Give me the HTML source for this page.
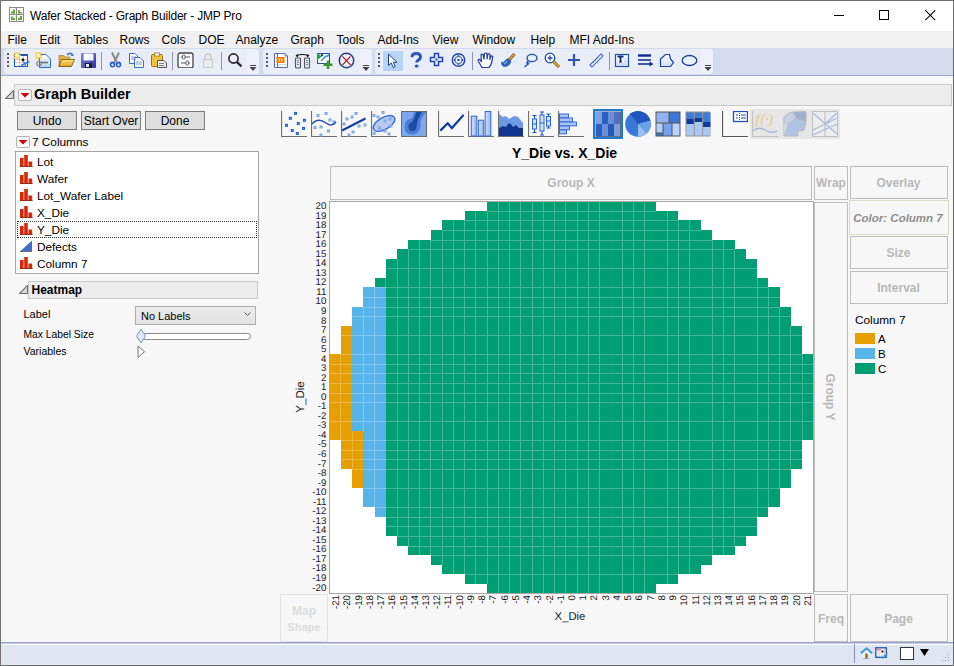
<!DOCTYPE html>
<html><head><meta charset="utf-8"><style>
html,body{margin:0;padding:0;}
body{width:954px;height:666px;position:relative;overflow:hidden;background:#f7f7f7;font-family:"Liberation Sans", sans-serif;}
</style></head><body>

<div style="position:absolute;left:0px;top:0px;width:954px;height:31px;background:#ffffff;"></div>
<div style="position:absolute;left:0px;top:31px;width:954px;height:17px;background:#f0f0f0;"></div>
<div style="position:absolute;left:0px;top:48px;width:954px;height:27px;background:#d5dbef;"></div>
<div style="position:absolute;left:0px;top:75px;width:954px;height:1px;background:#9aa7d3;"></div>
<div style="position:absolute;left:0px;top:642px;width:954px;height:1px;background:#98a4cf;"></div>
<div style="position:absolute;left:0px;top:643px;width:954px;height:1px;background:#c3cbe6;"></div>
<div style="position:absolute;left:0px;top:644px;width:954px;height:1px;background:#ffffff;"></div>
<div style="position:absolute;left:0px;top:645px;width:954px;height:20px;background:#dfe6f1;"></div>
<div style="position:absolute;left:0px;top:0px;width:954px;height:1px;background:#6f6f6f;"></div>
<div style="position:absolute;left:0px;top:665px;width:954px;height:1px;background:#6f6f6f;"></div>
<div style="position:absolute;left:0px;top:0px;width:1px;height:666px;background:#6f6f6f;"></div>
<div style="position:absolute;left:953px;top:0px;width:1px;height:666px;background:#6f6f6f;"></div>
<svg style="position:absolute;left:9px;top:7px" width="16" height="16" viewBox="0 0 16 16"><rect x="0.5" y="0.5" width="14" height="14" fill="#fff" stroke="#8a8a8a"/><line x1="7.5" y1="1" x2="7.5" y2="15" stroke="#8a8a8a"/><line x1="1" y1="7.5" x2="15" y2="7.5" stroke="#8a8a8a"/><rect x="2" y="4.5" width="4" height="2" fill="#6aa33a"/><rect x="4" y="2.5" width="2" height="4" fill="#6aa33a"/><rect x="9" y="3" width="1.8" height="3.5" fill="#6aa33a"/><rect x="9" y="5" width="4" height="1.5" fill="#6aa33a"/><rect x="2" y="9.5" width="1.8" height="3.5" fill="#6aa33a"/><rect x="2" y="11" width="4" height="2" fill="#6aa33a"/><rect x="9" y="11" width="4" height="2" fill="#6aa33a"/><rect x="11" y="9" width="2" height="4" fill="#6aa33a"/></svg>
<div style="position:absolute;left:30px;top:9.84px;font-size:12px;line-height:12px;color:#000;font-weight:normal;white-space:nowrap;letter-spacing:-0.2px;">Wafer Stacked - Graph Builder - JMP Pro</div>
<div style="position:absolute;left:834px;top:15px;width:10px;height:1px;background:#000;"></div>
<div style="position:absolute;left:879px;top:10px;width:10px;height:10px;border:1px solid #000;box-sizing:border-box;"></div>
<svg style="position:absolute;left:925px;top:10px" width="11" height="11" viewBox="0 0 11 11"><path d="M0.3 0.3 L10.2 10.2 M10.2 0.3 L0.3 10.2" stroke="#000" stroke-width="1.05"/></svg>
<div style="position:absolute;left:7.5px;top:33.84px;font-size:12px;line-height:12px;color:#000;font-weight:normal;white-space:nowrap;">File</div>
<div style="position:absolute;left:39.5px;top:33.84px;font-size:12px;line-height:12px;color:#000;font-weight:normal;white-space:nowrap;">Edit</div>
<div style="position:absolute;left:73.5px;top:33.84px;font-size:12px;line-height:12px;color:#000;font-weight:normal;white-space:nowrap;">Tables</div>
<div style="position:absolute;left:119.5px;top:33.84px;font-size:12px;line-height:12px;color:#000;font-weight:normal;white-space:nowrap;">Rows</div>
<div style="position:absolute;left:161.5px;top:33.84px;font-size:12px;line-height:12px;color:#000;font-weight:normal;white-space:nowrap;">Cols</div>
<div style="position:absolute;left:198.5px;top:33.84px;font-size:12px;line-height:12px;color:#000;font-weight:normal;white-space:nowrap;">DOE</div>
<div style="position:absolute;left:235.5px;top:33.84px;font-size:12px;line-height:12px;color:#000;font-weight:normal;white-space:nowrap;">Analyze</div>
<div style="position:absolute;left:290.5px;top:33.84px;font-size:12px;line-height:12px;color:#000;font-weight:normal;white-space:nowrap;">Graph</div>
<div style="position:absolute;left:336.5px;top:33.84px;font-size:12px;line-height:12px;color:#000;font-weight:normal;white-space:nowrap;">Tools</div>
<div style="position:absolute;left:377.5px;top:33.84px;font-size:12px;line-height:12px;color:#000;font-weight:normal;white-space:nowrap;">Add-Ins</div>
<div style="position:absolute;left:432.5px;top:33.84px;font-size:12px;line-height:12px;color:#000;font-weight:normal;white-space:nowrap;">View</div>
<div style="position:absolute;left:472.5px;top:33.84px;font-size:12px;line-height:12px;color:#000;font-weight:normal;white-space:nowrap;">Window</div>
<div style="position:absolute;left:530.5px;top:33.84px;font-size:12px;line-height:12px;color:#000;font-weight:normal;white-space:nowrap;">Help</div>
<div style="position:absolute;left:569.5px;top:33.84px;font-size:12px;line-height:12px;color:#000;font-weight:normal;white-space:nowrap;">MFI Add-Ins</div>
<div style="position:absolute;left:4px;top:49px;width:255px;height:25px;background:#e9edf8;border-radius:4px;"></div>
<div style="position:absolute;left:263px;top:49px;width:109px;height:25px;background:#e9edf8;border-radius:4px;"></div>
<div style="position:absolute;left:375px;top:49px;width:338px;height:25px;background:#e9edf8;border-radius:4px;"></div>
<div style="position:absolute;left:247px;top:49px;width:12px;height:25px;background:#eef1fa;border-radius:0 4px 4px 0;"></div>
<div style="position:absolute;left:360px;top:49px;width:12px;height:25px;background:#eef1fa;border-radius:0 4px 4px 0;"></div>
<div style="position:absolute;left:701px;top:49px;width:12px;height:25px;background:#eef1fa;border-radius:0 4px 4px 0;"></div>
<div style="position:absolute;left:7px;top:53px;width:2px;height:2px;background:#5b5b5b;"></div>
<div style="position:absolute;left:7px;top:57px;width:2px;height:2px;background:#5b5b5b;"></div>
<div style="position:absolute;left:7px;top:61px;width:2px;height:2px;background:#5b5b5b;"></div>
<div style="position:absolute;left:7px;top:65px;width:2px;height:2px;background:#5b5b5b;"></div>
<div style="position:absolute;left:266px;top:53px;width:2px;height:2px;background:#5b5b5b;"></div>
<div style="position:absolute;left:266px;top:57px;width:2px;height:2px;background:#5b5b5b;"></div>
<div style="position:absolute;left:266px;top:61px;width:2px;height:2px;background:#5b5b5b;"></div>
<div style="position:absolute;left:266px;top:65px;width:2px;height:2px;background:#5b5b5b;"></div>
<div style="position:absolute;left:378px;top:53px;width:2px;height:2px;background:#5b5b5b;"></div>
<div style="position:absolute;left:378px;top:57px;width:2px;height:2px;background:#5b5b5b;"></div>
<div style="position:absolute;left:378px;top:61px;width:2px;height:2px;background:#5b5b5b;"></div>
<div style="position:absolute;left:378px;top:65px;width:2px;height:2px;background:#5b5b5b;"></div>
<div style="position:absolute;left:101px;top:52px;width:1px;height:18px;background:#8d94b0;"></div>
<div style="position:absolute;left:172px;top:52px;width:1px;height:18px;background:#8d94b0;"></div>
<div style="position:absolute;left:221px;top:52px;width:1px;height:18px;background:#8d94b0;"></div>
<div style="position:absolute;left:472px;top:52px;width:1px;height:18px;background:#8d94b0;"></div>
<div style="position:absolute;left:609px;top:52px;width:1px;height:18px;background:#8d94b0;"></div>
<svg style="position:absolute;left:249px;top:64px" width="8" height="8" viewBox="0 0 8 8"><rect x="1" y="1" width="6" height="1" fill="#444"/><path d="M0.5 3 L7.5 3 L4 7 Z" fill="#444"/></svg>
<svg style="position:absolute;left:362px;top:64px" width="8" height="8" viewBox="0 0 8 8"><rect x="1" y="1" width="6" height="1" fill="#444"/><path d="M0.5 3 L7.5 3 L4 7 Z" fill="#444"/></svg>
<svg style="position:absolute;left:704px;top:64px" width="8" height="8" viewBox="0 0 8 8"><rect x="1" y="1" width="6" height="1" fill="#444"/><path d="M0.5 3 L7.5 3 L4 7 Z" fill="#444"/></svg>
<svg style="position:absolute;left:13px;top:52px" width="18" height="16" viewBox="0 0 18 16"><rect x="1.5" y="2.5" width="13" height="12" fill="#fff" stroke="#1f56b0"/><rect x="1" y="2" width="14" height="2" fill="#1f56b0"/><path d="M2 7.5H14 M2 10.5H14 M6.5 4V14 M10.5 4V14" stroke="#f0a0a0" stroke-width="0.7"/><path d="M4 -0.5V8 M0 3.5H8 M1 0.5L7 6.5 M7 0.5L1 6.5" stroke="#f2c94a" stroke-width="1.5"/><circle cx="4" cy="3.5" r="2" fill="#fff5c0"/><circle cx="10" cy="8" r="1.4" fill="#111"/><path d="M8 13.5 L16.5 9.5" stroke="#2f88e0" stroke-width="1.6"/><path d="M11 10 L13 15" stroke="#2f88e0" stroke-width="1.4"/></svg>
<svg style="position:absolute;left:35px;top:52px" width="18" height="16" viewBox="0 0 18 16"><path d="M4.5 2.5H11L15.5 7V15.5H4.5Z" fill="url(#sg1)" stroke="#2f6fc8"/><defs><linearGradient id="sg1" x1="0" y1="0" x2="0" y2="1"><stop offset="0" stop-color="#ffffff"/><stop offset="1" stop-color="#b9d3f2"/></linearGradient></defs><path d="M3.5 -0.5V8 M-0.5 3.5H7.5 M0.5 0.5L6.5 6.5 M6.5 0.5L0.5 6.5" stroke="#f2c94a" stroke-width="1.5"/><circle cx="3.5" cy="3.5" r="2" fill="#fff5c0"/><circle cx="4" cy="11.5" r="2.2" fill="none" stroke="#8a8a8a" stroke-width="1.3"/><path d="M6 10.5H13" stroke="#6f6f6f" stroke-width="1.6"/></svg>
<svg style="position:absolute;left:58px;top:52px" width="18" height="16" viewBox="0 0 18 16"><path d="M1 3.5H6L7.5 5H12V14H1Z" fill="#e0b040" stroke="#9a7a20" stroke-width="0.6"/><path d="M3.5 7.5H16.5L13.5 14.5H0.8Z" fill="url(#fg1)" stroke="#6a5010" stroke-width="0.8"/><defs><linearGradient id="fg1" x1="0" y1="0" x2="0" y2="1"><stop offset="0" stop-color="#ffe27a"/><stop offset="1" stop-color="#e0a020"/></linearGradient></defs><path d="M9 3Q12 -0.5 15 3" fill="none" stroke="#3b6fb0" stroke-width="1.3"/><path d="M14 1.5L16 4L13 4Z" fill="#3b6fb0"/></svg>
<svg style="position:absolute;left:80px;top:52px" width="18" height="16" viewBox="0 0 18 16"><rect x="1" y="1" width="15" height="15" rx="1" fill="url(#svg1)"/><defs><linearGradient id="svg1" x1="0" y1="0" x2="1" y2="1"><stop offset="0" stop-color="#7a7ee0"/><stop offset="1" stop-color="#30349a"/></linearGradient></defs><rect x="3.5" y="1.5" width="10" height="7" fill="#f2f4ff"/><rect x="4" y="2" width="4" height="6" fill="#ffffff"/><rect x="5" y="11" width="7" height="5" fill="#1a1a2a"/><rect x="6" y="12" width="3" height="3" fill="#e8e8e8"/></svg>
<svg style="position:absolute;left:109px;top:52px" width="13" height="16" viewBox="0 0 13 16"><path d="M3 0.5L7.5 10 M10 0.5L5.5 10" stroke="#8a8a8a" stroke-width="2"/><ellipse cx="3.5" cy="12.5" rx="2.8" ry="3" fill="#2d5fc0"/><ellipse cx="9.5" cy="12.5" rx="2.8" ry="3" fill="#2d5fc0"/><ellipse cx="3.5" cy="12.8" rx="1.2" ry="1.4" fill="#cfe0ff"/><ellipse cx="9.5" cy="12.8" rx="1.2" ry="1.4" fill="#cfe0ff"/></svg>
<svg style="position:absolute;left:128px;top:52px" width="17" height="16" viewBox="0 0 17 16"><path d="M1.5 1.5H7L9.5 4V11.5H1.5Z" fill="#fff" stroke="#2f6fc8"/><path d="M6.5 5.5H12L15.5 9V15.5H6.5Z" fill="#fff" stroke="#2f6fc8"/><path d="M3 5H8 M3 7H8 M8 10H14 M8 12H14" stroke="#5a86d0" stroke-width="0.8"/></svg>
<svg style="position:absolute;left:150px;top:52px" width="18" height="16" viewBox="0 0 18 16"><rect x="1.5" y="2.5" width="11" height="12" rx="1" fill="#f1c23c" stroke="#9a7410"/><rect x="4.5" y="1" width="5" height="3" fill="#fff" stroke="#9a7410" stroke-width="0.8"/><path d="M7.5 8.5H14L16.5 11V15.5H7.5Z" fill="#eee" stroke="#555"/><path d="M9 11.5H14 M9 13.5H14" stroke="#666" stroke-width="0.8"/></svg>
<svg style="position:absolute;left:177px;top:52px" width="17" height="16" viewBox="0 0 17 16"><rect x="1" y="1" width="15" height="15" rx="2" fill="#fafafa" stroke="#444" stroke-width="1.3"/><path d="M4 5H13 M4 11H13" stroke="#555" stroke-width="1"/><rect x="5.5" y="3" width="2.5" height="4" rx="1" fill="#fff" stroke="#555" stroke-width="0.9"/><rect x="9" y="9" width="2.5" height="4" rx="1" fill="#fff" stroke="#555" stroke-width="0.9"/></svg>
<svg style="position:absolute;left:201px;top:52px" width="14" height="16" viewBox="0 0 14 16"><path d="M4 7V5A3 3 0 0 1 10 5V7" fill="none" stroke="#c9c9c9" stroke-width="1.4"/><rect x="2.5" y="7.5" width="9" height="8" fill="#ececec" stroke="#c9c9c9"/></svg>
<svg style="position:absolute;left:227px;top:52px" width="16" height="16" viewBox="0 0 16 16"><circle cx="6.5" cy="6.5" r="4.6" fill="none" stroke="#2a2a2a" stroke-width="1.7"/><path d="M9.8 9.8L14.5 14.5" stroke="#2a2a2a" stroke-width="2.4"/></svg>
<svg style="position:absolute;left:273px;top:52px" width="16" height="17" viewBox="0 0 16 17"><path d="M1.5 1.5H12L14.5 4V15.5H1.5Z" fill="#fff" stroke="#5a6aa8"/><path d="M12 1.5V4H14.5" fill="#cfe0f8" stroke="#5a6aa8" stroke-width="0.8"/><path d="M2 5.5H14 M2 12.5H14 M2 9H14" stroke="#b8cce8" stroke-width="0.8"/><path d="M4.5 2V15" stroke="#e04040" stroke-width="1"/><rect x="3.5" y="5" width="8" height="6" fill="#f07a10"/><rect x="5.5" y="6.5" width="4" height="3" fill="#f8e040"/><path d="M7.5 6.5V9.5" stroke="#d07010" stroke-width="0.8"/></svg>
<svg style="position:absolute;left:294px;top:52px" width="17" height="17" viewBox="0 0 17 17"><rect x="1.5" y="6" width="5" height="10" rx="0.8" fill="#dce8f6" stroke="#555" stroke-width="1.1"/><rect x="10.5" y="6" width="5" height="10" rx="0.8" fill="#dce8f6" stroke="#555" stroke-width="1.1"/><path d="M3 8.5H5 M3 10.5H5 M3 12.5H5 M12 8.5H14 M12 10.5H14 M12 12.5H14" stroke="#6a7a90" stroke-width="0.9"/><path d="M2.5 3.5 Q8.5 1.5 14.5 3.5" fill="none" stroke="#111" stroke-width="1.1"/><path d="M1.5 3.8L4 2L4 5.5Z M15.5 3.8L13 2L13 5.5Z" fill="#111"/></svg>
<svg style="position:absolute;left:316px;top:52px" width="17" height="17" viewBox="0 0 17 17"><rect x="1.5" y="1.5" width="12" height="10" fill="#fff" stroke="#2050a0"/><path d="M2 4H13" stroke="#a0b8e0" stroke-width="0.8"/><path d="M1 1L6 4.5L1 8Z" fill="#2aa040"/><path d="M5 9L9 5L13 3" fill="none" stroke="#3a8ee0" stroke-width="1.4"/><circle cx="6" cy="3" r="1" fill="#111"/><path d="M12 8.5V17 M7.5 12.8H16.5" stroke="#3a9a30" stroke-width="2.6"/></svg>
<svg style="position:absolute;left:338px;top:52px" width="17" height="17" viewBox="0 0 17 17"><circle cx="8.5" cy="8.5" r="7.2" fill="#fff" stroke="#283e84" stroke-width="1.5"/><path d="M8.5 2.5V4 M8.5 13V14.5 M2.5 8.5H4 M13 8.5H14.5" stroke="#9ab0d8" stroke-width="0.8"/><path d="M4.5 4.5L8.5 8.5L12.5 4.5 M8.5 8.5L8.5 8.5 M4.5 13L8.5 8.5L12.5 13" stroke="#b02040" stroke-width="1.3" fill="none"/></svg>
<div style="position:absolute;left:383px;top:51px;width:20px;height:20px;background:#b7d3f7;"></div>
<svg style="position:absolute;left:387px;top:53px" width="12" height="16" viewBox="0 0 12 16"><path d="M1.5 1 V12.5 L4.2 10 L6.3 14.5 L8.3 13.6 L6.3 9.3 H9.8 Z" fill="#fff" stroke="#1c3f8a" stroke-width="1" stroke-linejoin="round"/></svg>
<svg style="position:absolute;left:409px;top:52px" width="14" height="16" viewBox="0 0 14 16"><path d="M3 5.2 Q3 1.5 7.3 1.5 Q11.5 1.5 11.5 4.8 Q11.5 7 9 8.3 Q7.8 9 7.8 10.5" fill="none" stroke="#2d55b8" stroke-width="3"/><ellipse cx="7.6" cy="14" rx="2" ry="1.6" fill="#2d55b8"/></svg>
<svg style="position:absolute;left:429px;top:52px" width="15" height="16" viewBox="0 0 15 16"><path d="M5.5 1.5H9.5V5.5H13.5V9.5H9.5V13.5H5.5V9.5H1.5V5.5H5.5Z" fill="#e6f0fc" stroke="#1f45a8" stroke-width="1.5"/><rect x="6.5" y="6.5" width="2" height="2" fill="#1f45a8"/></svg>
<svg style="position:absolute;left:451px;top:52px" width="15" height="16" viewBox="0 0 15 16"><circle cx="7.5" cy="8" r="6.2" fill="#e6f0fc" stroke="#1f45a8" stroke-width="1.4"/><circle cx="7.5" cy="8" r="3.6" fill="none" stroke="#1f45a8" stroke-width="0.8"/><path d="M7.5 2.8L9 4.6H6Z M7.5 13.2L9 11.4H6Z M2.3 8L4.1 6.5V9.5Z M12.7 8L10.9 6.5V9.5Z" fill="#1f45a8"/><rect x="6.5" y="7" width="2" height="2" fill="#1f45a8"/></svg>
<svg style="position:absolute;left:477px;top:52px" width="18" height="16" viewBox="0 0 18 16"><path d="M5 15.5 L1 8.5 Q1 7 2.5 7.5 L4.5 9.5 L4 3 Q4.5 1.5 6 2.5 L7 7 L7.5 1.5 Q9 0.5 10 1.5 L10 7 L11 2 Q12.5 1.5 13 2.5 L12.8 7.5 L14 4 Q15.5 3.8 15.8 5 L14.5 11 Q13.5 14 12 15.5 Z" fill="#fff" stroke="#1f3f90" stroke-width="1.2" stroke-linejoin="round"/></svg>
<svg style="position:absolute;left:500px;top:52px" width="17" height="16" viewBox="0 0 17 16"><path d="M1.5 10 Q1 15 6 14.5 Q10.5 13 11 9 L8.5 6.5 Q5 7.5 4 10 Q3 11 1.5 10Z" fill="#2a63c4" stroke="#1a4a9a" stroke-width="0.6"/><path d="M4 12 Q6 11.5 7 9" fill="none" stroke="#a8c8ff" stroke-width="1"/><path d="M9.5 7.5L14.5 2" stroke="#6a4a10" stroke-width="3"/><path d="M9.5 7.5L14.5 2" stroke="#e0a830" stroke-width="1.8"/></svg>
<svg style="position:absolute;left:523px;top:52px" width="15" height="16" viewBox="0 0 15 16"><ellipse cx="9" cy="6" rx="5" ry="3.6" fill="none" stroke="#1f4fb0" stroke-width="1.4"/><path d="M5.5 8.5 Q3 10 5 12 Q4 13 1.5 15" fill="none" stroke="#1f4fb0" stroke-width="1.3"/><circle cx="5" cy="11" r="1.2" fill="none" stroke="#1f4fb0" stroke-width="0.9"/></svg>
<svg style="position:absolute;left:544px;top:52px" width="17" height="17" viewBox="0 0 17 17"><circle cx="6" cy="6" r="4.8" fill="#fff" stroke="#1f4fb0" stroke-width="1.3"/><path d="M3.5 6H8.5 M6 3.5V8.5" stroke="#1f4fb0" stroke-width="1.3"/><path d="M9.5 9.5L15 15" stroke="#6a4a10" stroke-width="3"/><path d="M9.5 9.5L15 15" stroke="#d8a030" stroke-width="1.8"/></svg>
<svg style="position:absolute;left:567px;top:52px" width="14" height="16" viewBox="0 0 14 16"><path d="M7 2V14 M1 8H13" stroke="#2d55b8" stroke-width="2.2"/></svg>
<svg style="position:absolute;left:588px;top:52px" width="17" height="17" viewBox="0 0 17 17"><path d="M2 13L13 2L15 4L4 15Z" fill="#fff" stroke="#4a70c0" stroke-width="1.2"/><path d="M5 10L6 11 M7 8L8 9 M9 6L10 7" stroke="#4a70c0" stroke-width="0.8"/></svg>
<svg style="position:absolute;left:614px;top:53px" width="17" height="15" viewBox="0 0 17 15"><rect x="1.5" y="1.5" width="13" height="12" fill="url(#tg1)" stroke="#1c4fb0" stroke-width="1.2"/><defs><linearGradient id="tg1" x1="0" y1="0" x2="0" y2="1"><stop offset="0" stop-color="#ffffff"/><stop offset="1" stop-color="#dfe6f4"/></linearGradient></defs><path d="M3.5 3.5H9.5 M6.5 3.5V9" stroke="#0c2a8a" stroke-width="1.8"/><path d="M5 9H8" stroke="#0c2a8a" stroke-width="1"/><path d="M10 6H13.5 M10 8.5H13.5 M3 11H13.5" stroke="#b8c4e0" stroke-width="0.8"/></svg>
<svg style="position:absolute;left:637px;top:53px" width="18" height="15" viewBox="0 0 18 15"><path d="M1 2.5H14" stroke="#0c2a8a" stroke-width="2.4"/><path d="M1 7H14 M1 11H13" stroke="#0c2a8a" stroke-width="1.5"/><path d="M12.5 8.5L16.5 11L12.5 13.5Z" fill="#0c2a8a"/></svg>
<svg style="position:absolute;left:659px;top:53px" width="16" height="15" viewBox="0 0 16 15"><path d="M1.5 6L6.5 1.5H10.5L11.5 6L14.5 9.5L11.5 13.5H1.5Z" fill="url(#pg1)" stroke="#1c3f9a" stroke-width="1.2"/><defs><linearGradient id="pg1" x1="0" y1="0" x2="0" y2="1"><stop offset="0" stop-color="#f4f8ff"/><stop offset="1" stop-color="#d6e4f8"/></linearGradient></defs></svg>
<svg style="position:absolute;left:681px;top:53px" width="18" height="15" viewBox="0 0 18 15"><ellipse cx="8.5" cy="7.5" rx="7.3" ry="5" fill="#e8f0fc" stroke="#1c3f9a" stroke-width="1.3"/></svg>
<div style="position:absolute;left:14px;top:84px;width:938px;height:22px;background:#ececec;border:1px solid #c9c9c9;box-sizing:border-box;"></div>
<svg style="position:absolute;left:5px;top:90px" width="9" height="9"><path d="M8.5 0.5 L8.5 8.5 L0.5 8.5 Z" fill="#d9d9d9" stroke="#6e6e6e" stroke-width="1.1"/></svg>
<div style="position:absolute;left:18px;top:89px;width:12px;height:10px;border:1px solid #b4b4b4;border-radius:2px;background:#fafafa;"></div>
<svg style="position:absolute;left:18px;top:89px" width="14" height="12"><path d="M2.5 4.0 L11.5 4.0 L7.0 8.5 Z" fill="#d40000"/></svg>
<div style="position:absolute;left:34px;top:87.03px;font-size:14.5px;line-height:14.5px;color:#000;font-weight:bold;white-space:nowrap;">Graph Builder</div>
<div style="position:absolute;left:17px;top:111px;width:60px;height:19px;background:#dedede;border:1px solid #7b7b7b;box-sizing:border-box;"></div>
<div style="position:absolute;left:47.0px;top:114.84px;font-size:12px;line-height:12px;color:#000;font-weight:normal;white-space:nowrap;transform:translateX(-50%);">Undo</div>
<div style="position:absolute;left:81px;top:111px;width:60px;height:19px;background:#dedede;border:1px solid #7b7b7b;box-sizing:border-box;"></div>
<div style="position:absolute;left:111.0px;top:114.84px;font-size:12px;line-height:12px;color:#000;font-weight:normal;white-space:nowrap;transform:translateX(-50%);">Start Over</div>
<div style="position:absolute;left:145px;top:111px;width:60px;height:19px;background:#dedede;border:1px solid #7b7b7b;box-sizing:border-box;"></div>
<div style="position:absolute;left:175.0px;top:114.84px;font-size:12px;line-height:12px;color:#000;font-weight:normal;white-space:nowrap;transform:translateX(-50%);">Done</div>
<div style="position:absolute;left:16px;top:136px;width:12px;height:10px;border:1px solid #b4b4b4;border-radius:2px;background:#fafafa;"></div>
<svg style="position:absolute;left:16px;top:136px" width="14" height="12"><path d="M2.5 4.0 L11.5 4.0 L7.0 8.5 Z" fill="#d40000"/></svg>
<div style="position:absolute;left:32px;top:137.01px;font-size:11.8px;line-height:11.8px;color:#000;font-weight:normal;white-space:nowrap;">7 Columns</div>
<div style="position:absolute;left:15px;top:151px;width:244px;height:123px;background:#fff;border:1px solid #a5a5a5;box-sizing:border-box;"></div>
<svg style="position:absolute;left:20px;top:155px" width="13" height="12"><rect x="0" y="3" width="3.6" height="9" fill="#d42a0a"/><rect x="4.2" y="0" width="3.6" height="12" fill="#d42a0a"/><rect x="8.4" y="6.5" width="3.8" height="5.5" fill="#d42a0a"/><rect x="0" y="11" width="12.5" height="1" fill="#9a2a18"/></svg>
<div style="position:absolute;left:37px;top:156.51px;font-size:11.8px;line-height:11.8px;color:#000;font-weight:normal;white-space:nowrap;">Lot</div>
<svg style="position:absolute;left:20px;top:172px" width="13" height="12"><rect x="0" y="3" width="3.6" height="9" fill="#d42a0a"/><rect x="4.2" y="0" width="3.6" height="12" fill="#d42a0a"/><rect x="8.4" y="6.5" width="3.8" height="5.5" fill="#d42a0a"/><rect x="0" y="11" width="12.5" height="1" fill="#9a2a18"/></svg>
<div style="position:absolute;left:37px;top:173.51px;font-size:11.8px;line-height:11.8px;color:#000;font-weight:normal;white-space:nowrap;">Wafer</div>
<svg style="position:absolute;left:20px;top:189px" width="13" height="12"><rect x="0" y="3" width="3.6" height="9" fill="#d42a0a"/><rect x="4.2" y="0" width="3.6" height="12" fill="#d42a0a"/><rect x="8.4" y="6.5" width="3.8" height="5.5" fill="#d42a0a"/><rect x="0" y="11" width="12.5" height="1" fill="#9a2a18"/></svg>
<div style="position:absolute;left:37px;top:190.51px;font-size:11.8px;line-height:11.8px;color:#000;font-weight:normal;white-space:nowrap;">Lot_Wafer Label</div>
<svg style="position:absolute;left:20px;top:206px" width="13" height="12"><rect x="0" y="3" width="3.6" height="9" fill="#d42a0a"/><rect x="4.2" y="0" width="3.6" height="12" fill="#d42a0a"/><rect x="8.4" y="6.5" width="3.8" height="5.5" fill="#d42a0a"/><rect x="0" y="11" width="12.5" height="1" fill="#9a2a18"/></svg>
<div style="position:absolute;left:37px;top:207.51px;font-size:11.8px;line-height:11.8px;color:#000;font-weight:normal;white-space:nowrap;">X_Die</div>
<svg style="position:absolute;left:20px;top:223px" width="13" height="12"><rect x="0" y="3" width="3.6" height="9" fill="#d42a0a"/><rect x="4.2" y="0" width="3.6" height="12" fill="#d42a0a"/><rect x="8.4" y="6.5" width="3.8" height="5.5" fill="#d42a0a"/><rect x="0" y="11" width="12.5" height="1" fill="#9a2a18"/></svg>
<div style="position:absolute;left:37px;top:224.51px;font-size:11.8px;line-height:11.8px;color:#000;font-weight:normal;white-space:nowrap;">Y_Die</div>
<svg style="position:absolute;left:20px;top:240px" width="13" height="12"><path d="M0 11.5 L12 0.5 L12 11.5 Z" fill="#3d6ec8"/><path d="M0 11.5 L12 11.5" stroke="#6a6a6a" stroke-width="1"/></svg>
<div style="position:absolute;left:37px;top:241.51px;font-size:11.8px;line-height:11.8px;color:#000;font-weight:normal;white-space:nowrap;">Defects</div>
<svg style="position:absolute;left:20px;top:257px" width="13" height="12"><rect x="0" y="3" width="3.6" height="9" fill="#d42a0a"/><rect x="4.2" y="0" width="3.6" height="12" fill="#d42a0a"/><rect x="8.4" y="6.5" width="3.8" height="5.5" fill="#d42a0a"/><rect x="0" y="11" width="12.5" height="1" fill="#9a2a18"/></svg>
<div style="position:absolute;left:37px;top:258.51px;font-size:11.8px;line-height:11.8px;color:#000;font-weight:normal;white-space:nowrap;">Column 7</div>
<div style="position:absolute;left:17px;top:221px;width:240px;height:17px;border:1px dotted #333;box-sizing:border-box;"></div>
<svg style="position:absolute;left:19px;top:285px" width="9" height="9"><path d="M8.5 0.5 L8.5 8.5 L0.5 8.5 Z" fill="#d9d9d9" stroke="#6e6e6e" stroke-width="1.1"/></svg>
<div style="position:absolute;left:28px;top:281px;width:230px;height:18px;background:#ececec;border:1px solid #c9c9c9;box-sizing:border-box;"></div>
<div style="position:absolute;left:31.5px;top:283.84px;font-size:12px;line-height:12px;color:#000;font-weight:bold;white-space:nowrap;">Heatmap</div>
<div style="position:absolute;left:23.5px;top:308.69px;font-size:11px;line-height:11px;color:#000;font-weight:normal;white-space:nowrap;">Label</div>
<div style="position:absolute;left:23.5px;top:329.78px;font-size:10.3px;line-height:10.3px;color:#000;font-weight:normal;white-space:nowrap;">Max Label Size</div>
<div style="position:absolute;left:23.5px;top:346.11px;font-size:10.5px;line-height:10.5px;color:#000;font-weight:normal;white-space:nowrap;">Variables</div>
<div style="position:absolute;left:135px;top:306px;width:121px;height:19px;background:linear-gradient(#ececec,#e2e2e2);border:1px solid #adadad;box-sizing:border-box;"></div>
<div style="position:absolute;left:141px;top:310.69px;font-size:11px;line-height:11px;color:#000;font-weight:normal;white-space:nowrap;">No Labels</div>
<svg style="position:absolute;left:244px;top:312px" width="7" height="5"><path d="M0.5 0.5 L3.5 3.5 L6.5 0.5" fill="none" stroke="#555" stroke-width="1"/></svg>
<div style="position:absolute;left:137px;top:333px;width:114px;height:7px;background:#fff;border:1px solid #8c8c8c;border-radius:3.5px;box-sizing:border-box;"></div>
<svg style="position:absolute;left:136px;top:328px" width="11" height="16"><path d="M5 1 L9.5 8 L5 15 L0.5 8 Z" fill="#dde8f7" stroke="#7a9acc" stroke-width="1"/></svg>
<svg style="position:absolute;left:137px;top:345px" width="9" height="14"><path d="M1 1 L7.5 6.75 L1 12.5 Z" fill="#fafafa" stroke="#7a7a7a" stroke-width="1"/></svg>
<svg style="position:absolute;left:281px;top:111px" width="26" height="26" viewBox="0 0 26 26"><path d="M0.5 0V25.5H26" fill="none" stroke="#6e6e6e" stroke-width="1.2"/><rect x="13.0" y="0.8999999999999999" width="3" height="3" fill="#2060c8"/><rect x="14.0" y="1.9" width="1" height="1" fill="#6a9ae8"/><rect x="7.800000000000001" y="5.8" width="3" height="3" fill="#2060c8"/><rect x="8.8" y="6.8" width="1" height="1" fill="#6a9ae8"/><rect x="21.9" y="7.800000000000001" width="3" height="3" fill="#2060c8"/><rect x="22.9" y="8.8" width="1" height="1" fill="#6a9ae8"/><rect x="15.8" y="11.0" width="3" height="3" fill="#2060c8"/><rect x="16.8" y="12.0" width="1" height="1" fill="#6a9ae8"/><rect x="4.0" y="12.8" width="3" height="3" fill="#2060c8"/><rect x="5.0" y="13.8" width="1" height="1" fill="#6a9ae8"/><rect x="21.0" y="16.0" width="3" height="3" fill="#2060c8"/><rect x="22.0" y="17.0" width="1" height="1" fill="#6a9ae8"/><rect x="9.8" y="18.0" width="3" height="3" fill="#2060c8"/><rect x="10.8" y="19.0" width="1" height="1" fill="#6a9ae8"/><rect x="14.8" y="21.0" width="3" height="3" fill="#2060c8"/><rect x="15.8" y="22.0" width="1" height="1" fill="#6a9ae8"/></svg>
<svg style="position:absolute;left:311px;top:111px" width="26" height="26" viewBox="0 0 26 26"><path d="M0.5 0V25.5H26" fill="none" stroke="#6e6e6e" stroke-width="1.2"/><rect x="5.5" y="3.0" width="3" height="3" fill="#7aa2e0"/><rect x="6.5" y="4.0" width="1" height="1" fill="#c0d4f4"/><rect x="13.5" y="1.0" width="3" height="3" fill="#7aa2e0"/><rect x="14.5" y="2.0" width="1" height="1" fill="#c0d4f4"/><rect x="17.5" y="7.5" width="3" height="3" fill="#7aa2e0"/><rect x="18.5" y="8.5" width="1" height="1" fill="#c0d4f4"/><rect x="21.5" y="9.5" width="3" height="3" fill="#7aa2e0"/><rect x="22.5" y="10.5" width="1" height="1" fill="#c0d4f4"/><rect x="2.5" y="15.0" width="3" height="3" fill="#7aa2e0"/><rect x="3.5" y="16.0" width="1" height="1" fill="#c0d4f4"/><rect x="8.5" y="14.5" width="3" height="3" fill="#7aa2e0"/><rect x="9.5" y="15.5" width="1" height="1" fill="#c0d4f4"/><rect x="16.0" y="18.5" width="3" height="3" fill="#7aa2e0"/><rect x="17.0" y="19.5" width="1" height="1" fill="#c0d4f4"/><rect x="8.5" y="22.5" width="3" height="3" fill="#7aa2e0"/><rect x="9.5" y="23.5" width="1" height="1" fill="#c0d4f4"/><path d="M1 13 C6 7 11 9 15 12 S22 15 25 11" fill="none" stroke="#2a56b0" stroke-width="1.5"/></svg>
<svg style="position:absolute;left:341px;top:111px" width="26" height="26" viewBox="0 0 26 26"><path d="M0.5 0V25.5H26" fill="none" stroke="#6e6e6e" stroke-width="1.2"/><rect x="13.5" y="1.0" width="3" height="3" fill="#7aa2e0"/><rect x="14.5" y="2.0" width="1" height="1" fill="#c0d4f4"/><rect x="4.5" y="6.5" width="3" height="3" fill="#7aa2e0"/><rect x="5.5" y="7.5" width="1" height="1" fill="#c0d4f4"/><rect x="9.5" y="4.5" width="3" height="3" fill="#7aa2e0"/><rect x="10.5" y="5.5" width="1" height="1" fill="#c0d4f4"/><rect x="1.5" y="11.5" width="3" height="3" fill="#7aa2e0"/><rect x="2.5" y="12.5" width="1" height="1" fill="#c0d4f4"/><rect x="16.5" y="13.5" width="3" height="3" fill="#7aa2e0"/><rect x="17.5" y="14.5" width="1" height="1" fill="#c0d4f4"/><rect x="22.5" y="12.5" width="3" height="3" fill="#7aa2e0"/><rect x="23.5" y="13.5" width="1" height="1" fill="#c0d4f4"/><rect x="10.5" y="19.5" width="3" height="3" fill="#7aa2e0"/><rect x="11.5" y="20.5" width="1" height="1" fill="#c0d4f4"/><rect x="6.5" y="22.5" width="3" height="3" fill="#7aa2e0"/><rect x="7.5" y="23.5" width="1" height="1" fill="#c0d4f4"/><path d="M1 19.5 L24.5 7.5" stroke="#0f3da8" stroke-width="2"/></svg>
<svg style="position:absolute;left:371px;top:111px" width="26" height="26" viewBox="0 0 26 26"><path d="M0.5 0V25.5H26" fill="none" stroke="#6e6e6e" stroke-width="1.2"/><ellipse cx="13" cy="12.5" rx="12" ry="6" transform="rotate(-30 13 12.5)" fill="#b9c9f0" stroke="#2f6fe0" stroke-width="1.4"/><rect x="10.5" y="0.0" width="3" height="3" fill="#7aa2e0"/><rect x="11.5" y="1.0" width="1" height="1" fill="#c0d4f4"/><rect x="1.5" y="3.0" width="3" height="3" fill="#7aa2e0"/><rect x="2.5" y="4.0" width="1" height="1" fill="#c0d4f4"/><rect x="5.5" y="4.5" width="3" height="3" fill="#7aa2e0"/><rect x="6.5" y="5.5" width="1" height="1" fill="#c0d4f4"/><rect x="17.5" y="6.5" width="3" height="3" fill="#7aa2e0"/><rect x="18.5" y="7.5" width="1" height="1" fill="#c0d4f4"/><rect x="12.5" y="8.5" width="3" height="3" fill="#7aa2e0"/><rect x="13.5" y="9.5" width="1" height="1" fill="#c0d4f4"/><rect x="18.5" y="13.5" width="3" height="3" fill="#7aa2e0"/><rect x="19.5" y="14.5" width="1" height="1" fill="#c0d4f4"/><rect x="7.0" y="15.5" width="3" height="3" fill="#7aa2e0"/><rect x="8.0" y="16.5" width="1" height="1" fill="#c0d4f4"/><rect x="1.5" y="21.0" width="3" height="3" fill="#7aa2e0"/><rect x="2.5" y="22.0" width="1" height="1" fill="#c0d4f4"/><rect x="12.5" y="18.5" width="3" height="3" fill="#7aa2e0"/><rect x="13.5" y="19.5" width="1" height="1" fill="#c0d4f4"/><rect x="16.5" y="21.5" width="3" height="3" fill="#7aa2e0"/><rect x="17.5" y="22.5" width="1" height="1" fill="#c0d4f4"/></svg>
<svg style="position:absolute;left:401px;top:111px" width="26" height="26" viewBox="0 0 26 26"><rect x="0.5" y="0.5" width="25" height="25" fill="#7ea8ec" stroke="#6a6a6a"/><path d="M13 1 L25 1 Q21 6 19.5 10 Q20 13 19.5 16 Q18 23.5 11.5 23.5 Q3.5 23.5 3.5 15.5 Q3.5 8 11 7.5 Q12.5 4 13 1 Z" fill="#4a7fd8"/><path d="M15.5 1 L21 1 Q18 5.5 16.5 10 Q16 11.5 15.8 14.5 Q15.5 20 11.5 20 Q7.5 20 7.5 15.5 Q7.5 11.5 11.5 11 Q13.5 6 15.5 1 Z" fill="#1b4ca2"/></svg>
<svg style="position:absolute;left:438px;top:111px" width="26" height="26" viewBox="0 0 26 26"><path d="M0.5 0V25.5H26" fill="none" stroke="#6e6e6e" stroke-width="1.2"/><path d="M2.3 19.6 L9.7 12.3 L13.9 17 L25.6 3.9" fill="none" stroke="#0c3aa0" stroke-width="2.2"/></svg>
<svg style="position:absolute;left:468px;top:111px" width="26" height="26" viewBox="0 0 26 26"><defs><linearGradient id="bg1" x1="0" x2="1"><stop offset="0" stop-color="#d0e2fb"/><stop offset="1" stop-color="#8fb5ef"/></linearGradient></defs><path d="M0.5 0V25.5H26" fill="none" stroke="#6e6e6e" stroke-width="1.2"/><rect x="3.3" y="5.2" width="5.500000000000001" height="19.8" fill="url(#bg1)" stroke="#3868d8" stroke-width="1"/><rect x="10.4" y="9.2" width="5.299999999999999" height="15.8" fill="url(#bg1)" stroke="#3868d8" stroke-width="1"/><rect x="17.2" y="0.5" width="5.600000000000001" height="24.5" fill="url(#bg1)" stroke="#3868d8" stroke-width="1"/></svg>
<svg style="position:absolute;left:498px;top:111px" width="26" height="26" viewBox="0 0 26 26"><path d="M0.5 0V25.5H26" fill="none" stroke="#6e6e6e" stroke-width="1.2"/><path d="M1 3 L5 6 L8 5 L11 8 L16 5 L20 6 L25 12 L25 25 L1 25 Z" fill="#6c9be3"/><path d="M1 17 L5 15 L8 16 L10 13 L12 12 L15 16 L18 14 L21 17 L25 17 L25 25 L1 25 Z" fill="#0f3590"/></svg>
<svg style="position:absolute;left:528px;top:111px" width="26" height="26" viewBox="0 0 26 26"><path d="M0.5 0V25.5H26" fill="none" stroke="#6e6e6e" stroke-width="1.2"/><path d="M6.5 4.5 V21.5 M4.5 4.5 H8.5 M4.5 21.5 H8.5" stroke="#1a4fc0" stroke-width="1"/><rect x="4.5" y="8" width="4" height="10" fill="#d6e4fb" stroke="#2a62d8" stroke-width="1"/><path d="M4.5 13 H8.5" stroke="#2a62d8"/><path d="M14 1 V24 M12 1 H16 M12 24 H16" stroke="#1a4fc0" stroke-width="1"/><rect x="12" y="4" width="4" height="16" fill="#d6e4fb" stroke="#2a62d8" stroke-width="1"/><path d="M12 12 H16" stroke="#2a62d8"/><path d="M20.5 3 V17 M18.5 3 H22.5 M18.5 17 H22.5" stroke="#1a4fc0" stroke-width="1"/><rect x="18.5" y="5.5" width="4" height="9.5" fill="#d6e4fb" stroke="#2a62d8" stroke-width="1"/><path d="M18.5 10 H22.5" stroke="#2a62d8"/></svg>
<svg style="position:absolute;left:558px;top:111px" width="26" height="26" viewBox="0 0 26 26"><path d="M0.5 0V25.5H26" fill="none" stroke="#6e6e6e" stroke-width="1.2"/><rect x="1.5" y="3" width="9" height="3.8" fill="#a6c3f3" stroke="#3a6ad8" stroke-width="1"/><rect x="1.5" y="7" width="13" height="3.8" fill="#a6c3f3" stroke="#3a6ad8" stroke-width="1"/><rect x="1.5" y="11" width="17" height="3.8" fill="#a6c3f3" stroke="#3a6ad8" stroke-width="1"/><rect x="1.5" y="15" width="10" height="3.8" fill="#a6c3f3" stroke="#3a6ad8" stroke-width="1"/><rect x="1.5" y="19" width="7" height="3.8" fill="#a6c3f3" stroke="#3a6ad8" stroke-width="1"/></svg>
<div style="position:absolute;left:593px;top:109px;width:30px;height:30px;border:2px solid #1b7ad8;background:#9aa0b8;box-sizing:border-box;"></div>
<svg style="position:absolute;left:595px;top:111px" width="26" height="26" viewBox="0 0 26 26"><rect x="0" y="0" width="26" height="26" fill="#a9aebf"/><path d="M26 1V26H1" fill="none" stroke="#555a6a" stroke-width="1.6"/><rect x="1" y="1" width="6" height="12" fill="#7aa0e0"/><rect x="7" y="1" width="6" height="12" fill="#2a5fc8"/><rect x="13" y="1" width="6" height="12" fill="#6a90d8"/><rect x="19" y="1" width="6" height="12" fill="#4a70c8"/><rect x="1" y="13" width="6" height="12" fill="#2a5fc8"/><rect x="7" y="13" width="6" height="12" fill="#6a90d8"/><rect x="13" y="13" width="6" height="12" fill="#2a58b8"/><rect x="19" y="13" width="6" height="12" fill="#7aa0e0"/></svg>
<svg style="position:absolute;left:625px;top:111px" width="26" height="26" viewBox="0 0 26 26"><circle cx="13" cy="13" r="12.8" fill="#3a78d8"/><path d="M13 13 L5 2.8 A12.8 12.8 0 0 1 25.3 9.5 Z" fill="#2355c0"/><path d="M13 13 L25.3 9.5 A12.8 12.8 0 0 1 21.5 22.5 Z" fill="#6aa2e8"/><path d="M13 13 L21.5 22.5 A12.8 12.8 0 0 1 13 25.8 Z" fill="#9bbef2"/></svg>
<svg style="position:absolute;left:655px;top:111px" width="26" height="26" viewBox="0 0 26 26"><rect x="0.5" y="0.5" width="25" height="25" fill="#555"/><rect x="1.5" y="1.5" width="12" height="10" fill="#8fb4f0"/><rect x="14.5" y="1.5" width="10" height="10" fill="#3a78d8"/><rect x="1.5" y="12.5" width="6" height="9" fill="#b5d0f8"/><rect x="1.5" y="22.5" width="6" height="2" fill="#3a78d8"/><rect x="8.5" y="12.5" width="8" height="12" fill="#72a2f0"/><rect x="17.5" y="12.5" width="7" height="12" fill="#b8d2fa"/></svg>
<svg style="position:absolute;left:685px;top:111px" width="26" height="26" viewBox="0 0 26 26"><rect x="0.5" y="0.5" width="25" height="25" fill="#999"/><rect x="1.5" y="1.5" width="7.3" height="6.5" fill="#3f7ad8"/><rect x="1.5" y="8" width="7.3" height="5" fill="#0f3a9a"/><rect x="1.5" y="13" width="7.3" height="11.5" fill="#a9c8f6"/><rect x="9.8" y="1.5" width="7.3" height="5.5" fill="#3f7ad8"/><rect x="9.8" y="7" width="7.3" height="4" fill="#0f3a9a"/><rect x="9.8" y="11" width="7.3" height="13.5" fill="#a9c8f6"/><rect x="18.1" y="1.5" width="7.3" height="9.5" fill="#3f7ad8"/><rect x="18.1" y="11" width="7.3" height="5" fill="#0f3a9a"/><rect x="18.1" y="16" width="7.3" height="8.5" fill="#a9c8f6"/></svg>
<svg style="position:absolute;left:722px;top:111px" width="26" height="26" viewBox="0 0 26 26"><path d="M0.5 0V25.5H26" fill="none" stroke="#555" stroke-width="1.2"/><rect x="11.5" y="0.5" width="14" height="10" fill="#fff" stroke="#1c4fc0" stroke-width="1.3"/><path d="M14 4H16 M14 7H16 M19 4H24 M19 7H24" stroke="#1c4fc0" stroke-width="1.2"/><path d="M17.5 2V10" stroke="#1c4fc0" stroke-dasharray="1 1"/></svg>
<div style="position:absolute;left:750px;top:109px;width:90px;height:30px;background:#e6e6e6;"></div>
<svg style="position:absolute;left:752px;top:111px" width="26" height="26" viewBox="0 0 26 26"><path d="M0.5 0V25.5H26" fill="none" stroke="#c2c2c2" stroke-width="1.2"/><text x="3" y="13" font-family="Liberation Serif" font-style="italic" font-weight="bold" font-size="15" fill="#e2d3a2">f(·)</text><path d="M1 20 Q7 15 13 19 T25 20" fill="none" stroke="#a9b9d9" stroke-width="1.4"/></svg>
<svg style="position:absolute;left:782px;top:111px" width="26" height="26" viewBox="0 0 26 26"><path d="M2 6 L7 2 L11 1 L14 7 L5 14 L1 13 Z" fill="#c3d0e8"/><path d="M11 1 L24 0.5 L24 11 L15 8 Z" fill="#a0b0d0"/><path d="M5 14 L14 7 L24 11 L22 19 L16 20 L16 25 L2 25 Z" fill="#b0c2e2"/><path d="M2 6 L7 2 L11 1 L24 0.5 L24 11 L22 19 L16 20 L16 25 L2 25 Z M5 14 L14 7 L24 11 M11 1 L14 7" fill="none" stroke="#bababa" stroke-width="1"/></svg>
<svg style="position:absolute;left:812px;top:111px" width="26" height="26" viewBox="0 0 26 26"><rect x="0.5" y="0.5" width="25" height="25" fill="#ececec" stroke="#c0c0c0"/><path d="M13 0V26" stroke="#bbb"/><path d="M1 2 L25 23 M1 19 L25 7 M1 24 L25 13 M13 13 L25 2" stroke="#a9bcdf" stroke-width="1.3"/></svg>
<div style="position:absolute;left:512px;top:146.15px;font-size:14px;line-height:14px;color:#000;font-weight:bold;white-space:nowrap;">Y_Die vs. X_Die</div>
<div style="position:absolute;left:330px;top:166px;width:482px;height:34px;background:#f7f7f7;border:1px solid #bdbdbd;box-sizing:border-box;"></div>
<div style="position:absolute;left:571px;top:177.34px;font-size:12px;line-height:12px;color:#b8b8b8;font-weight:bold;white-space:nowrap;transform:translateX(-50%);">Group X</div>
<div style="position:absolute;left:814px;top:166px;width:34px;height:34px;background:#f7f7f7;border:1px solid #bdbdbd;box-sizing:border-box;"></div>
<div style="position:absolute;left:831px;top:177.34px;font-size:12px;line-height:12px;color:#b8b8b8;font-weight:bold;white-space:nowrap;transform:translateX(-50%);">Wrap</div>
<div style="position:absolute;left:850px;top:166px;width:98px;height:33px;background:#f7f7f7;border:1px solid #bdbdbd;box-sizing:border-box;"></div>
<div style="position:absolute;left:898.5px;top:176.84px;font-size:12px;line-height:12px;color:#b8b8b8;font-weight:bold;white-space:nowrap;transform:translateX(-50%);">Overlay</div>
<div style="position:absolute;left:849px;top:200px;width:100px;height:35px;background:#f7f7f7;border:1px solid #dcdccb;box-sizing:border-box;"></div>
<div style="position:absolute;left:898px;top:213.27px;font-size:11.5px;line-height:11.5px;color:#8e8e8e;font-weight:bold;white-space:nowrap;transform:translateX(-50%);font-style:italic;">Color: Column 7</div>
<div style="position:absolute;left:850px;top:236px;width:98px;height:33px;background:#f7f7f7;border:1px solid #bdbdbd;box-sizing:border-box;"></div>
<div style="position:absolute;left:898.5px;top:247.34px;font-size:12px;line-height:12px;color:#b8b8b8;font-weight:bold;white-space:nowrap;transform:translateX(-50%);">Size</div>
<div style="position:absolute;left:850px;top:271px;width:98px;height:33px;background:#f7f7f7;border:1px solid #bdbdbd;box-sizing:border-box;"></div>
<div style="position:absolute;left:898.5px;top:282.34px;font-size:12px;line-height:12px;color:#b8b8b8;font-weight:bold;white-space:nowrap;transform:translateX(-50%);">Interval</div>
<div style="position:absolute;left:855px;top:314.71px;font-size:11.8px;line-height:11.8px;color:#000;font-weight:normal;white-space:nowrap;">Column 7</div>
<div style="position:absolute;left:855px;top:333px;width:20px;height:11px;background:#e69f00;"></div>
<div style="position:absolute;left:878px;top:333.77px;font-size:11.5px;line-height:11.5px;color:#000;font-weight:normal;white-space:nowrap;">A</div>
<div style="position:absolute;left:855px;top:348px;width:20px;height:11px;background:#56b4e9;"></div>
<div style="position:absolute;left:878px;top:348.77px;font-size:11.5px;line-height:11.5px;color:#000;font-weight:normal;white-space:nowrap;">B</div>
<div style="position:absolute;left:855px;top:363px;width:20px;height:11px;background:#009e73;"></div>
<div style="position:absolute;left:878px;top:363.77px;font-size:11.5px;line-height:11.5px;color:#000;font-weight:normal;white-space:nowrap;">C</div>
<div style="position:absolute;left:814px;top:202px;width:34px;height:390px;background:#f7f7f7;border:1px solid #bdbdbd;box-sizing:border-box;"></div>
<div style="position:absolute;left:830px;top:397px;font-size:12px;line-height:12px;font-weight:bold;color:#b8b8b8;white-space:nowrap;transform:translate(-50%,-50%) rotate(90deg);">Group Y</div>
<div style="position:absolute;left:814px;top:594px;width:34px;height:48px;background:#f7f7f7;border:1px solid #bdbdbd;box-sizing:border-box;"></div>
<div style="position:absolute;left:831px;top:612.84px;font-size:12px;line-height:12px;color:#b8b8b8;font-weight:bold;white-space:nowrap;transform:translateX(-50%);">Freq</div>
<div style="position:absolute;left:850px;top:594px;width:98px;height:48px;background:#f7f7f7;border:1px solid #bdbdbd;box-sizing:border-box;"></div>
<div style="position:absolute;left:898.5px;top:612.84px;font-size:12px;line-height:12px;color:#b8b8b8;font-weight:bold;white-space:nowrap;transform:translateX(-50%);">Page</div>
<div style="position:absolute;left:280px;top:594px;width:48px;height:48px;background:#f7f7f7;border:1px solid #e2e2e2;box-sizing:border-box;"></div>
<div style="position:absolute;left:304px;top:605.34px;font-size:12px;line-height:12px;color:#dcdcdc;font-weight:bold;white-space:nowrap;transform:translateX(-50%);">Map</div>
<div style="position:absolute;left:304px;top:622.02px;font-size:11.2px;line-height:11.2px;color:#dcdcdc;font-weight:bold;white-space:nowrap;transform:translateX(-50%);">Shape</div>
<svg style="position:absolute;left:0px;top:0px" width="954" height="666" viewBox="0 0 954 666" shape-rendering="crispEdges"><rect x="330" y="202" width="483" height="391" fill="#ffffff"/><path d="M341 326h11v9h-11zM341 335h11v10h-11zM341 345h11v9h-11zM330 354h22v10h-22zM330 364h22v9h-22zM330 373h22v10h-22zM330 383h22v10h-22zM330 393h22v9h-22zM330 402h22v10h-22zM330 412h22v9h-22zM330 421h22v10h-22zM330 431h33v9h-33zM341 440h22v10h-22zM341 450h22v9h-22zM341 459h22v10h-22zM352 469h11v10h-11zM352 479h11v9h-11z" fill="#e69f00"/><path d="M363 287h23v10h-23zM363 297h23v10h-23zM352 307h34v9h-34zM352 316h34v10h-34zM352 326h34v9h-34zM352 335h34v10h-34zM352 345h34v9h-34zM352 354h34v10h-34zM352 364h34v9h-34zM352 373h34v10h-34zM352 383h34v10h-34zM352 393h34v9h-34zM352 402h34v10h-34zM352 412h34v9h-34zM352 421h34v10h-34zM363 431h23v9h-23zM363 440h23v10h-23zM363 450h23v9h-23zM363 459h23v10h-23zM363 469h23v10h-23zM363 479h23v9h-23zM363 488h23v10h-23zM363 498h23v9h-23zM375 507h11v10h-11z" fill="#56b4e9"/><path d="M487 201h169v10h-169zM465 211h213v9h-213zM442 220h259v10h-259zM431 230h281v10h-281zM408 240h327v9h-327zM397 249h349v10h-349zM386 259h371v9h-371zM386 268h371v10h-371zM375 278h393v9h-393zM386 287h394v10h-394zM386 297h394v10h-394zM386 307h405v9h-405zM386 316h405v10h-405zM386 326h416v9h-416zM386 335h416v10h-416zM386 345h416v9h-416zM386 354h427v10h-427zM386 364h427v9h-427zM386 373h427v10h-427zM386 383h427v10h-427zM386 393h427v9h-427zM386 402h427v10h-427zM386 412h427v9h-427zM386 421h427v10h-427zM386 431h427v9h-427zM386 440h416v10h-416zM386 450h416v9h-416zM386 459h416v10h-416zM386 469h405v10h-405zM386 479h405v9h-405zM386 488h394v10h-394zM386 498h394v9h-394zM386 507h382v10h-382zM386 517h371v9h-371zM386 526h371v10h-371zM397 536h349v10h-349zM408 546h327v9h-327zM431 555h281v10h-281zM442 565h259v9h-259zM465 574h213v10h-213zM487 584h169v9h-169z" fill="#009e73"/><path d="M498 201h1v10h-1zM509 201h1v10h-1zM520 201h1v10h-1zM532 201h1v10h-1zM543 201h1v10h-1zM554 201h1v10h-1zM565 201h1v10h-1zM577 201h1v10h-1zM588 201h1v10h-1zM599 201h1v10h-1zM622 201h1v10h-1zM633 201h1v10h-1zM644 201h1v10h-1zM475 211h1v9h-1zM487 211h1v9h-1zM498 211h1v9h-1zM509 211h1v9h-1zM520 211h1v9h-1zM532 211h1v9h-1zM543 211h1v9h-1zM554 211h1v9h-1zM565 211h1v9h-1zM577 211h1v9h-1zM588 211h1v9h-1zM599 211h1v9h-1zM622 211h1v9h-1zM633 211h1v9h-1zM644 211h1v9h-1zM667 211h1v9h-1zM453 220h1v10h-1zM464 220h1v10h-1zM475 220h1v10h-1zM487 220h1v10h-1zM498 220h1v10h-1zM509 220h1v10h-1zM520 220h1v10h-1zM532 220h1v10h-1zM543 220h1v10h-1zM554 220h1v10h-1zM565 220h1v10h-1zM577 220h1v10h-1zM588 220h1v10h-1zM599 220h1v10h-1zM622 220h1v10h-1zM633 220h1v10h-1zM644 220h1v10h-1zM667 220h1v10h-1zM678 220h1v10h-1zM689 220h1v10h-1zM442 230h1v10h-1zM453 230h1v10h-1zM464 230h1v10h-1zM475 230h1v10h-1zM487 230h1v10h-1zM498 230h1v10h-1zM509 230h1v10h-1zM520 230h1v10h-1zM532 230h1v10h-1zM543 230h1v10h-1zM554 230h1v10h-1zM565 230h1v10h-1zM577 230h1v10h-1zM588 230h1v10h-1zM599 230h1v10h-1zM622 230h1v10h-1zM633 230h1v10h-1zM644 230h1v10h-1zM667 230h1v10h-1zM678 230h1v10h-1zM689 230h1v10h-1zM419 240h1v9h-1zM430 240h1v9h-1zM442 240h1v9h-1zM453 240h1v9h-1zM464 240h1v9h-1zM475 240h1v9h-1zM487 240h1v9h-1zM498 240h1v9h-1zM509 240h1v9h-1zM520 240h1v9h-1zM532 240h1v9h-1zM543 240h1v9h-1zM554 240h1v9h-1zM565 240h1v9h-1zM577 240h1v9h-1zM588 240h1v9h-1zM599 240h1v9h-1zM622 240h1v9h-1zM633 240h1v9h-1zM644 240h1v9h-1zM667 240h1v9h-1zM678 240h1v9h-1zM689 240h1v9h-1zM712 240h1v9h-1zM723 240h1v9h-1zM408 249h1v10h-1zM419 249h1v10h-1zM430 249h1v10h-1zM442 249h1v10h-1zM453 249h1v10h-1zM464 249h1v10h-1zM475 249h1v10h-1zM487 249h1v10h-1zM498 249h1v10h-1zM509 249h1v10h-1zM520 249h1v10h-1zM532 249h1v10h-1zM543 249h1v10h-1zM554 249h1v10h-1zM565 249h1v10h-1zM577 249h1v10h-1zM588 249h1v10h-1zM599 249h1v10h-1zM622 249h1v10h-1zM633 249h1v10h-1zM644 249h1v10h-1zM667 249h1v10h-1zM678 249h1v10h-1zM689 249h1v10h-1zM712 249h1v10h-1zM723 249h1v10h-1zM734 249h1v10h-1zM397 259h1v9h-1zM408 259h1v9h-1zM419 259h1v9h-1zM430 259h1v9h-1zM442 259h1v9h-1zM453 259h1v9h-1zM464 259h1v9h-1zM475 259h1v9h-1zM487 259h1v9h-1zM498 259h1v9h-1zM509 259h1v9h-1zM520 259h1v9h-1zM532 259h1v9h-1zM543 259h1v9h-1zM554 259h1v9h-1zM565 259h1v9h-1zM577 259h1v9h-1zM588 259h1v9h-1zM599 259h1v9h-1zM622 259h1v9h-1zM633 259h1v9h-1zM644 259h1v9h-1zM667 259h1v9h-1zM678 259h1v9h-1zM689 259h1v9h-1zM712 259h1v9h-1zM723 259h1v9h-1zM734 259h1v9h-1zM397 268h1v10h-1zM408 268h1v10h-1zM419 268h1v10h-1zM430 268h1v10h-1zM442 268h1v10h-1zM453 268h1v10h-1zM464 268h1v10h-1zM475 268h1v10h-1zM487 268h1v10h-1zM498 268h1v10h-1zM509 268h1v10h-1zM520 268h1v10h-1zM532 268h1v10h-1zM543 268h1v10h-1zM554 268h1v10h-1zM565 268h1v10h-1zM577 268h1v10h-1zM588 268h1v10h-1zM599 268h1v10h-1zM622 268h1v10h-1zM633 268h1v10h-1zM644 268h1v10h-1zM667 268h1v10h-1zM678 268h1v10h-1zM689 268h1v10h-1zM712 268h1v10h-1zM723 268h1v10h-1zM734 268h1v10h-1zM385 278h1v9h-1zM397 278h1v9h-1zM408 278h1v9h-1zM419 278h1v9h-1zM430 278h1v9h-1zM442 278h1v9h-1zM453 278h1v9h-1zM464 278h1v9h-1zM475 278h1v9h-1zM487 278h1v9h-1zM498 278h1v9h-1zM509 278h1v9h-1zM520 278h1v9h-1zM532 278h1v9h-1zM543 278h1v9h-1zM554 278h1v9h-1zM565 278h1v9h-1zM577 278h1v9h-1zM588 278h1v9h-1zM599 278h1v9h-1zM622 278h1v9h-1zM633 278h1v9h-1zM644 278h1v9h-1zM667 278h1v9h-1zM678 278h1v9h-1zM689 278h1v9h-1zM712 278h1v9h-1zM723 278h1v9h-1zM734 278h1v9h-1zM757 278h1v9h-1zM374 287h1v10h-1zM397 287h1v10h-1zM408 287h1v10h-1zM419 287h1v10h-1zM430 287h1v10h-1zM442 287h1v10h-1zM453 287h1v10h-1zM464 287h1v10h-1zM475 287h1v10h-1zM487 287h1v10h-1zM498 287h1v10h-1zM509 287h1v10h-1zM520 287h1v10h-1zM532 287h1v10h-1zM543 287h1v10h-1zM554 287h1v10h-1zM565 287h1v10h-1zM577 287h1v10h-1zM588 287h1v10h-1zM599 287h1v10h-1zM622 287h1v10h-1zM633 287h1v10h-1zM644 287h1v10h-1zM667 287h1v10h-1zM678 287h1v10h-1zM689 287h1v10h-1zM712 287h1v10h-1zM723 287h1v10h-1zM734 287h1v10h-1zM757 287h1v10h-1zM768 287h1v10h-1zM374 297h1v10h-1zM397 297h1v10h-1zM408 297h1v10h-1zM419 297h1v10h-1zM430 297h1v10h-1zM442 297h1v10h-1zM453 297h1v10h-1zM464 297h1v10h-1zM475 297h1v10h-1zM487 297h1v10h-1zM498 297h1v10h-1zM509 297h1v10h-1zM520 297h1v10h-1zM532 297h1v10h-1zM543 297h1v10h-1zM554 297h1v10h-1zM565 297h1v10h-1zM577 297h1v10h-1zM588 297h1v10h-1zM599 297h1v10h-1zM622 297h1v10h-1zM633 297h1v10h-1zM644 297h1v10h-1zM667 297h1v10h-1zM678 297h1v10h-1zM689 297h1v10h-1zM712 297h1v10h-1zM723 297h1v10h-1zM734 297h1v10h-1zM757 297h1v10h-1zM768 297h1v10h-1zM363 307h1v9h-1zM374 307h1v9h-1zM397 307h1v9h-1zM408 307h1v9h-1zM419 307h1v9h-1zM430 307h1v9h-1zM442 307h1v9h-1zM453 307h1v9h-1zM464 307h1v9h-1zM475 307h1v9h-1zM487 307h1v9h-1zM498 307h1v9h-1zM509 307h1v9h-1zM520 307h1v9h-1zM532 307h1v9h-1zM543 307h1v9h-1zM554 307h1v9h-1zM565 307h1v9h-1zM577 307h1v9h-1zM588 307h1v9h-1zM599 307h1v9h-1zM622 307h1v9h-1zM633 307h1v9h-1zM644 307h1v9h-1zM667 307h1v9h-1zM678 307h1v9h-1zM689 307h1v9h-1zM712 307h1v9h-1zM723 307h1v9h-1zM734 307h1v9h-1zM757 307h1v9h-1zM768 307h1v9h-1zM779 307h1v9h-1zM363 316h1v10h-1zM374 316h1v10h-1zM397 316h1v10h-1zM408 316h1v10h-1zM419 316h1v10h-1zM430 316h1v10h-1zM442 316h1v10h-1zM453 316h1v10h-1zM464 316h1v10h-1zM475 316h1v10h-1zM487 316h1v10h-1zM498 316h1v10h-1zM509 316h1v10h-1zM520 316h1v10h-1zM532 316h1v10h-1zM543 316h1v10h-1zM554 316h1v10h-1zM565 316h1v10h-1zM577 316h1v10h-1zM588 316h1v10h-1zM599 316h1v10h-1zM622 316h1v10h-1zM633 316h1v10h-1zM644 316h1v10h-1zM667 316h1v10h-1zM678 316h1v10h-1zM689 316h1v10h-1zM712 316h1v10h-1zM723 316h1v10h-1zM734 316h1v10h-1zM757 316h1v10h-1zM768 316h1v10h-1zM779 316h1v10h-1zM363 326h1v9h-1zM374 326h1v9h-1zM397 326h1v9h-1zM408 326h1v9h-1zM419 326h1v9h-1zM430 326h1v9h-1zM442 326h1v9h-1zM453 326h1v9h-1zM464 326h1v9h-1zM475 326h1v9h-1zM487 326h1v9h-1zM498 326h1v9h-1zM509 326h1v9h-1zM520 326h1v9h-1zM532 326h1v9h-1zM543 326h1v9h-1zM554 326h1v9h-1zM565 326h1v9h-1zM577 326h1v9h-1zM588 326h1v9h-1zM599 326h1v9h-1zM622 326h1v9h-1zM633 326h1v9h-1zM644 326h1v9h-1zM667 326h1v9h-1zM678 326h1v9h-1zM689 326h1v9h-1zM712 326h1v9h-1zM723 326h1v9h-1zM734 326h1v9h-1zM757 326h1v9h-1zM768 326h1v9h-1zM779 326h1v9h-1zM790 326h1v9h-1zM363 335h1v10h-1zM374 335h1v10h-1zM397 335h1v10h-1zM408 335h1v10h-1zM419 335h1v10h-1zM430 335h1v10h-1zM442 335h1v10h-1zM453 335h1v10h-1zM464 335h1v10h-1zM475 335h1v10h-1zM487 335h1v10h-1zM498 335h1v10h-1zM509 335h1v10h-1zM520 335h1v10h-1zM532 335h1v10h-1zM543 335h1v10h-1zM554 335h1v10h-1zM565 335h1v10h-1zM577 335h1v10h-1zM588 335h1v10h-1zM599 335h1v10h-1zM622 335h1v10h-1zM633 335h1v10h-1zM644 335h1v10h-1zM667 335h1v10h-1zM678 335h1v10h-1zM689 335h1v10h-1zM712 335h1v10h-1zM723 335h1v10h-1zM734 335h1v10h-1zM757 335h1v10h-1zM768 335h1v10h-1zM779 335h1v10h-1zM790 335h1v10h-1zM363 345h1v9h-1zM374 345h1v9h-1zM397 345h1v9h-1zM408 345h1v9h-1zM419 345h1v9h-1zM430 345h1v9h-1zM442 345h1v9h-1zM453 345h1v9h-1zM464 345h1v9h-1zM475 345h1v9h-1zM487 345h1v9h-1zM498 345h1v9h-1zM509 345h1v9h-1zM520 345h1v9h-1zM532 345h1v9h-1zM543 345h1v9h-1zM554 345h1v9h-1zM565 345h1v9h-1zM577 345h1v9h-1zM588 345h1v9h-1zM599 345h1v9h-1zM622 345h1v9h-1zM633 345h1v9h-1zM644 345h1v9h-1zM667 345h1v9h-1zM678 345h1v9h-1zM689 345h1v9h-1zM712 345h1v9h-1zM723 345h1v9h-1zM734 345h1v9h-1zM757 345h1v9h-1zM768 345h1v9h-1zM779 345h1v9h-1zM790 345h1v9h-1zM340 354h1v10h-1zM363 354h1v10h-1zM374 354h1v10h-1zM397 354h1v10h-1zM408 354h1v10h-1zM419 354h1v10h-1zM430 354h1v10h-1zM442 354h1v10h-1zM453 354h1v10h-1zM464 354h1v10h-1zM475 354h1v10h-1zM487 354h1v10h-1zM498 354h1v10h-1zM509 354h1v10h-1zM520 354h1v10h-1zM532 354h1v10h-1zM543 354h1v10h-1zM554 354h1v10h-1zM565 354h1v10h-1zM577 354h1v10h-1zM588 354h1v10h-1zM599 354h1v10h-1zM622 354h1v10h-1zM633 354h1v10h-1zM644 354h1v10h-1zM667 354h1v10h-1zM678 354h1v10h-1zM689 354h1v10h-1zM712 354h1v10h-1zM723 354h1v10h-1zM734 354h1v10h-1zM757 354h1v10h-1zM768 354h1v10h-1zM779 354h1v10h-1zM790 354h1v10h-1zM802 354h1v10h-1zM340 364h1v9h-1zM363 364h1v9h-1zM374 364h1v9h-1zM397 364h1v9h-1zM408 364h1v9h-1zM419 364h1v9h-1zM430 364h1v9h-1zM442 364h1v9h-1zM453 364h1v9h-1zM464 364h1v9h-1zM475 364h1v9h-1zM487 364h1v9h-1zM498 364h1v9h-1zM509 364h1v9h-1zM520 364h1v9h-1zM532 364h1v9h-1zM543 364h1v9h-1zM554 364h1v9h-1zM565 364h1v9h-1zM577 364h1v9h-1zM588 364h1v9h-1zM599 364h1v9h-1zM622 364h1v9h-1zM633 364h1v9h-1zM644 364h1v9h-1zM667 364h1v9h-1zM678 364h1v9h-1zM689 364h1v9h-1zM712 364h1v9h-1zM723 364h1v9h-1zM734 364h1v9h-1zM757 364h1v9h-1zM768 364h1v9h-1zM779 364h1v9h-1zM790 364h1v9h-1zM802 364h1v9h-1zM340 373h1v10h-1zM363 373h1v10h-1zM374 373h1v10h-1zM397 373h1v10h-1zM408 373h1v10h-1zM419 373h1v10h-1zM430 373h1v10h-1zM442 373h1v10h-1zM453 373h1v10h-1zM464 373h1v10h-1zM475 373h1v10h-1zM487 373h1v10h-1zM498 373h1v10h-1zM509 373h1v10h-1zM520 373h1v10h-1zM532 373h1v10h-1zM543 373h1v10h-1zM554 373h1v10h-1zM565 373h1v10h-1zM577 373h1v10h-1zM588 373h1v10h-1zM599 373h1v10h-1zM622 373h1v10h-1zM633 373h1v10h-1zM644 373h1v10h-1zM667 373h1v10h-1zM678 373h1v10h-1zM689 373h1v10h-1zM712 373h1v10h-1zM723 373h1v10h-1zM734 373h1v10h-1zM757 373h1v10h-1zM768 373h1v10h-1zM779 373h1v10h-1zM790 373h1v10h-1zM802 373h1v10h-1zM340 383h1v10h-1zM363 383h1v10h-1zM374 383h1v10h-1zM397 383h1v10h-1zM408 383h1v10h-1zM419 383h1v10h-1zM430 383h1v10h-1zM442 383h1v10h-1zM453 383h1v10h-1zM464 383h1v10h-1zM475 383h1v10h-1zM487 383h1v10h-1zM498 383h1v10h-1zM509 383h1v10h-1zM520 383h1v10h-1zM532 383h1v10h-1zM543 383h1v10h-1zM554 383h1v10h-1zM565 383h1v10h-1zM577 383h1v10h-1zM588 383h1v10h-1zM599 383h1v10h-1zM622 383h1v10h-1zM633 383h1v10h-1zM644 383h1v10h-1zM667 383h1v10h-1zM678 383h1v10h-1zM689 383h1v10h-1zM712 383h1v10h-1zM723 383h1v10h-1zM734 383h1v10h-1zM757 383h1v10h-1zM768 383h1v10h-1zM779 383h1v10h-1zM790 383h1v10h-1zM802 383h1v10h-1zM340 393h1v9h-1zM363 393h1v9h-1zM374 393h1v9h-1zM397 393h1v9h-1zM408 393h1v9h-1zM419 393h1v9h-1zM430 393h1v9h-1zM442 393h1v9h-1zM453 393h1v9h-1zM464 393h1v9h-1zM475 393h1v9h-1zM487 393h1v9h-1zM498 393h1v9h-1zM509 393h1v9h-1zM520 393h1v9h-1zM532 393h1v9h-1zM543 393h1v9h-1zM554 393h1v9h-1zM565 393h1v9h-1zM577 393h1v9h-1zM588 393h1v9h-1zM599 393h1v9h-1zM622 393h1v9h-1zM633 393h1v9h-1zM644 393h1v9h-1zM667 393h1v9h-1zM678 393h1v9h-1zM689 393h1v9h-1zM712 393h1v9h-1zM723 393h1v9h-1zM734 393h1v9h-1zM757 393h1v9h-1zM768 393h1v9h-1zM779 393h1v9h-1zM790 393h1v9h-1zM802 393h1v9h-1zM340 402h1v10h-1zM363 402h1v10h-1zM374 402h1v10h-1zM397 402h1v10h-1zM408 402h1v10h-1zM419 402h1v10h-1zM430 402h1v10h-1zM442 402h1v10h-1zM453 402h1v10h-1zM464 402h1v10h-1zM475 402h1v10h-1zM487 402h1v10h-1zM498 402h1v10h-1zM509 402h1v10h-1zM520 402h1v10h-1zM532 402h1v10h-1zM543 402h1v10h-1zM554 402h1v10h-1zM565 402h1v10h-1zM577 402h1v10h-1zM588 402h1v10h-1zM599 402h1v10h-1zM622 402h1v10h-1zM633 402h1v10h-1zM644 402h1v10h-1zM667 402h1v10h-1zM678 402h1v10h-1zM689 402h1v10h-1zM712 402h1v10h-1zM723 402h1v10h-1zM734 402h1v10h-1zM757 402h1v10h-1zM768 402h1v10h-1zM779 402h1v10h-1zM790 402h1v10h-1zM802 402h1v10h-1zM340 412h1v9h-1zM363 412h1v9h-1zM374 412h1v9h-1zM397 412h1v9h-1zM408 412h1v9h-1zM419 412h1v9h-1zM430 412h1v9h-1zM442 412h1v9h-1zM453 412h1v9h-1zM464 412h1v9h-1zM475 412h1v9h-1zM487 412h1v9h-1zM498 412h1v9h-1zM509 412h1v9h-1zM520 412h1v9h-1zM532 412h1v9h-1zM543 412h1v9h-1zM554 412h1v9h-1zM565 412h1v9h-1zM577 412h1v9h-1zM588 412h1v9h-1zM599 412h1v9h-1zM622 412h1v9h-1zM633 412h1v9h-1zM644 412h1v9h-1zM667 412h1v9h-1zM678 412h1v9h-1zM689 412h1v9h-1zM712 412h1v9h-1zM723 412h1v9h-1zM734 412h1v9h-1zM757 412h1v9h-1zM768 412h1v9h-1zM779 412h1v9h-1zM790 412h1v9h-1zM802 412h1v9h-1zM340 421h1v10h-1zM363 421h1v10h-1zM374 421h1v10h-1zM397 421h1v10h-1zM408 421h1v10h-1zM419 421h1v10h-1zM430 421h1v10h-1zM442 421h1v10h-1zM453 421h1v10h-1zM464 421h1v10h-1zM475 421h1v10h-1zM487 421h1v10h-1zM498 421h1v10h-1zM509 421h1v10h-1zM520 421h1v10h-1zM532 421h1v10h-1zM543 421h1v10h-1zM554 421h1v10h-1zM565 421h1v10h-1zM577 421h1v10h-1zM588 421h1v10h-1zM599 421h1v10h-1zM622 421h1v10h-1zM633 421h1v10h-1zM644 421h1v10h-1zM667 421h1v10h-1zM678 421h1v10h-1zM689 421h1v10h-1zM712 421h1v10h-1zM723 421h1v10h-1zM734 421h1v10h-1zM757 421h1v10h-1zM768 421h1v10h-1zM779 421h1v10h-1zM790 421h1v10h-1zM802 421h1v10h-1zM340 431h1v9h-1zM352 431h1v9h-1zM374 431h1v9h-1zM397 431h1v9h-1zM408 431h1v9h-1zM419 431h1v9h-1zM430 431h1v9h-1zM442 431h1v9h-1zM453 431h1v9h-1zM464 431h1v9h-1zM475 431h1v9h-1zM487 431h1v9h-1zM498 431h1v9h-1zM509 431h1v9h-1zM520 431h1v9h-1zM532 431h1v9h-1zM543 431h1v9h-1zM554 431h1v9h-1zM565 431h1v9h-1zM577 431h1v9h-1zM588 431h1v9h-1zM599 431h1v9h-1zM622 431h1v9h-1zM633 431h1v9h-1zM644 431h1v9h-1zM667 431h1v9h-1zM678 431h1v9h-1zM689 431h1v9h-1zM712 431h1v9h-1zM723 431h1v9h-1zM734 431h1v9h-1zM757 431h1v9h-1zM768 431h1v9h-1zM779 431h1v9h-1zM790 431h1v9h-1zM802 431h1v9h-1zM352 440h1v10h-1zM374 440h1v10h-1zM397 440h1v10h-1zM408 440h1v10h-1zM419 440h1v10h-1zM430 440h1v10h-1zM442 440h1v10h-1zM453 440h1v10h-1zM464 440h1v10h-1zM475 440h1v10h-1zM487 440h1v10h-1zM498 440h1v10h-1zM509 440h1v10h-1zM520 440h1v10h-1zM532 440h1v10h-1zM543 440h1v10h-1zM554 440h1v10h-1zM565 440h1v10h-1zM577 440h1v10h-1zM588 440h1v10h-1zM599 440h1v10h-1zM622 440h1v10h-1zM633 440h1v10h-1zM644 440h1v10h-1zM667 440h1v10h-1zM678 440h1v10h-1zM689 440h1v10h-1zM712 440h1v10h-1zM723 440h1v10h-1zM734 440h1v10h-1zM757 440h1v10h-1zM768 440h1v10h-1zM779 440h1v10h-1zM790 440h1v10h-1zM352 450h1v9h-1zM374 450h1v9h-1zM397 450h1v9h-1zM408 450h1v9h-1zM419 450h1v9h-1zM430 450h1v9h-1zM442 450h1v9h-1zM453 450h1v9h-1zM464 450h1v9h-1zM475 450h1v9h-1zM487 450h1v9h-1zM498 450h1v9h-1zM509 450h1v9h-1zM520 450h1v9h-1zM532 450h1v9h-1zM543 450h1v9h-1zM554 450h1v9h-1zM565 450h1v9h-1zM577 450h1v9h-1zM588 450h1v9h-1zM599 450h1v9h-1zM622 450h1v9h-1zM633 450h1v9h-1zM644 450h1v9h-1zM667 450h1v9h-1zM678 450h1v9h-1zM689 450h1v9h-1zM712 450h1v9h-1zM723 450h1v9h-1zM734 450h1v9h-1zM757 450h1v9h-1zM768 450h1v9h-1zM779 450h1v9h-1zM790 450h1v9h-1zM352 459h1v10h-1zM374 459h1v10h-1zM397 459h1v10h-1zM408 459h1v10h-1zM419 459h1v10h-1zM430 459h1v10h-1zM442 459h1v10h-1zM453 459h1v10h-1zM464 459h1v10h-1zM475 459h1v10h-1zM487 459h1v10h-1zM498 459h1v10h-1zM509 459h1v10h-1zM520 459h1v10h-1zM532 459h1v10h-1zM543 459h1v10h-1zM554 459h1v10h-1zM565 459h1v10h-1zM577 459h1v10h-1zM588 459h1v10h-1zM599 459h1v10h-1zM622 459h1v10h-1zM633 459h1v10h-1zM644 459h1v10h-1zM667 459h1v10h-1zM678 459h1v10h-1zM689 459h1v10h-1zM712 459h1v10h-1zM723 459h1v10h-1zM734 459h1v10h-1zM757 459h1v10h-1zM768 459h1v10h-1zM779 459h1v10h-1zM790 459h1v10h-1zM374 469h1v10h-1zM397 469h1v10h-1zM408 469h1v10h-1zM419 469h1v10h-1zM430 469h1v10h-1zM442 469h1v10h-1zM453 469h1v10h-1zM464 469h1v10h-1zM475 469h1v10h-1zM487 469h1v10h-1zM498 469h1v10h-1zM509 469h1v10h-1zM520 469h1v10h-1zM532 469h1v10h-1zM543 469h1v10h-1zM554 469h1v10h-1zM565 469h1v10h-1zM577 469h1v10h-1zM588 469h1v10h-1zM599 469h1v10h-1zM622 469h1v10h-1zM633 469h1v10h-1zM644 469h1v10h-1zM667 469h1v10h-1zM678 469h1v10h-1zM689 469h1v10h-1zM712 469h1v10h-1zM723 469h1v10h-1zM734 469h1v10h-1zM757 469h1v10h-1zM768 469h1v10h-1zM779 469h1v10h-1zM374 479h1v9h-1zM397 479h1v9h-1zM408 479h1v9h-1zM419 479h1v9h-1zM430 479h1v9h-1zM442 479h1v9h-1zM453 479h1v9h-1zM464 479h1v9h-1zM475 479h1v9h-1zM487 479h1v9h-1zM498 479h1v9h-1zM509 479h1v9h-1zM520 479h1v9h-1zM532 479h1v9h-1zM543 479h1v9h-1zM554 479h1v9h-1zM565 479h1v9h-1zM577 479h1v9h-1zM588 479h1v9h-1zM599 479h1v9h-1zM622 479h1v9h-1zM633 479h1v9h-1zM644 479h1v9h-1zM667 479h1v9h-1zM678 479h1v9h-1zM689 479h1v9h-1zM712 479h1v9h-1zM723 479h1v9h-1zM734 479h1v9h-1zM757 479h1v9h-1zM768 479h1v9h-1zM779 479h1v9h-1zM374 488h1v10h-1zM397 488h1v10h-1zM408 488h1v10h-1zM419 488h1v10h-1zM430 488h1v10h-1zM442 488h1v10h-1zM453 488h1v10h-1zM464 488h1v10h-1zM475 488h1v10h-1zM487 488h1v10h-1zM498 488h1v10h-1zM509 488h1v10h-1zM520 488h1v10h-1zM532 488h1v10h-1zM543 488h1v10h-1zM554 488h1v10h-1zM565 488h1v10h-1zM577 488h1v10h-1zM588 488h1v10h-1zM599 488h1v10h-1zM622 488h1v10h-1zM633 488h1v10h-1zM644 488h1v10h-1zM667 488h1v10h-1zM678 488h1v10h-1zM689 488h1v10h-1zM712 488h1v10h-1zM723 488h1v10h-1zM734 488h1v10h-1zM757 488h1v10h-1zM768 488h1v10h-1zM374 498h1v9h-1zM397 498h1v9h-1zM408 498h1v9h-1zM419 498h1v9h-1zM430 498h1v9h-1zM442 498h1v9h-1zM453 498h1v9h-1zM464 498h1v9h-1zM475 498h1v9h-1zM487 498h1v9h-1zM498 498h1v9h-1zM509 498h1v9h-1zM520 498h1v9h-1zM532 498h1v9h-1zM543 498h1v9h-1zM554 498h1v9h-1zM565 498h1v9h-1zM577 498h1v9h-1zM588 498h1v9h-1zM599 498h1v9h-1zM622 498h1v9h-1zM633 498h1v9h-1zM644 498h1v9h-1zM667 498h1v9h-1zM678 498h1v9h-1zM689 498h1v9h-1zM712 498h1v9h-1zM723 498h1v9h-1zM734 498h1v9h-1zM757 498h1v9h-1zM768 498h1v9h-1zM397 507h1v10h-1zM408 507h1v10h-1zM419 507h1v10h-1zM430 507h1v10h-1zM442 507h1v10h-1zM453 507h1v10h-1zM464 507h1v10h-1zM475 507h1v10h-1zM487 507h1v10h-1zM498 507h1v10h-1zM509 507h1v10h-1zM520 507h1v10h-1zM532 507h1v10h-1zM543 507h1v10h-1zM554 507h1v10h-1zM565 507h1v10h-1zM577 507h1v10h-1zM588 507h1v10h-1zM599 507h1v10h-1zM622 507h1v10h-1zM633 507h1v10h-1zM644 507h1v10h-1zM667 507h1v10h-1zM678 507h1v10h-1zM689 507h1v10h-1zM712 507h1v10h-1zM723 507h1v10h-1zM734 507h1v10h-1zM757 507h1v10h-1zM397 517h1v9h-1zM408 517h1v9h-1zM419 517h1v9h-1zM430 517h1v9h-1zM442 517h1v9h-1zM453 517h1v9h-1zM464 517h1v9h-1zM475 517h1v9h-1zM487 517h1v9h-1zM498 517h1v9h-1zM509 517h1v9h-1zM520 517h1v9h-1zM532 517h1v9h-1zM543 517h1v9h-1zM554 517h1v9h-1zM565 517h1v9h-1zM577 517h1v9h-1zM588 517h1v9h-1zM599 517h1v9h-1zM622 517h1v9h-1zM633 517h1v9h-1zM644 517h1v9h-1zM667 517h1v9h-1zM678 517h1v9h-1zM689 517h1v9h-1zM712 517h1v9h-1zM723 517h1v9h-1zM734 517h1v9h-1zM397 526h1v10h-1zM408 526h1v10h-1zM419 526h1v10h-1zM430 526h1v10h-1zM442 526h1v10h-1zM453 526h1v10h-1zM464 526h1v10h-1zM475 526h1v10h-1zM487 526h1v10h-1zM498 526h1v10h-1zM509 526h1v10h-1zM520 526h1v10h-1zM532 526h1v10h-1zM543 526h1v10h-1zM554 526h1v10h-1zM565 526h1v10h-1zM577 526h1v10h-1zM588 526h1v10h-1zM599 526h1v10h-1zM622 526h1v10h-1zM633 526h1v10h-1zM644 526h1v10h-1zM667 526h1v10h-1zM678 526h1v10h-1zM689 526h1v10h-1zM712 526h1v10h-1zM723 526h1v10h-1zM734 526h1v10h-1zM408 536h1v10h-1zM419 536h1v10h-1zM430 536h1v10h-1zM442 536h1v10h-1zM453 536h1v10h-1zM464 536h1v10h-1zM475 536h1v10h-1zM487 536h1v10h-1zM498 536h1v10h-1zM509 536h1v10h-1zM520 536h1v10h-1zM532 536h1v10h-1zM543 536h1v10h-1zM554 536h1v10h-1zM565 536h1v10h-1zM577 536h1v10h-1zM588 536h1v10h-1zM599 536h1v10h-1zM622 536h1v10h-1zM633 536h1v10h-1zM644 536h1v10h-1zM667 536h1v10h-1zM678 536h1v10h-1zM689 536h1v10h-1zM712 536h1v10h-1zM723 536h1v10h-1zM734 536h1v10h-1zM419 546h1v9h-1zM430 546h1v9h-1zM442 546h1v9h-1zM453 546h1v9h-1zM464 546h1v9h-1zM475 546h1v9h-1zM487 546h1v9h-1zM498 546h1v9h-1zM509 546h1v9h-1zM520 546h1v9h-1zM532 546h1v9h-1zM543 546h1v9h-1zM554 546h1v9h-1zM565 546h1v9h-1zM577 546h1v9h-1zM588 546h1v9h-1zM599 546h1v9h-1zM622 546h1v9h-1zM633 546h1v9h-1zM644 546h1v9h-1zM667 546h1v9h-1zM678 546h1v9h-1zM689 546h1v9h-1zM712 546h1v9h-1zM723 546h1v9h-1zM442 555h1v10h-1zM453 555h1v10h-1zM464 555h1v10h-1zM475 555h1v10h-1zM487 555h1v10h-1zM498 555h1v10h-1zM509 555h1v10h-1zM520 555h1v10h-1zM532 555h1v10h-1zM543 555h1v10h-1zM554 555h1v10h-1zM565 555h1v10h-1zM577 555h1v10h-1zM588 555h1v10h-1zM599 555h1v10h-1zM622 555h1v10h-1zM633 555h1v10h-1zM644 555h1v10h-1zM667 555h1v10h-1zM678 555h1v10h-1zM689 555h1v10h-1zM453 565h1v9h-1zM464 565h1v9h-1zM475 565h1v9h-1zM487 565h1v9h-1zM498 565h1v9h-1zM509 565h1v9h-1zM520 565h1v9h-1zM532 565h1v9h-1zM543 565h1v9h-1zM554 565h1v9h-1zM565 565h1v9h-1zM577 565h1v9h-1zM588 565h1v9h-1zM599 565h1v9h-1zM622 565h1v9h-1zM633 565h1v9h-1zM644 565h1v9h-1zM667 565h1v9h-1zM678 565h1v9h-1zM689 565h1v9h-1zM475 574h1v10h-1zM487 574h1v10h-1zM498 574h1v10h-1zM509 574h1v10h-1zM520 574h1v10h-1zM532 574h1v10h-1zM543 574h1v10h-1zM554 574h1v10h-1zM565 574h1v10h-1zM577 574h1v10h-1zM588 574h1v10h-1zM599 574h1v10h-1zM622 574h1v10h-1zM633 574h1v10h-1zM644 574h1v10h-1zM667 574h1v10h-1zM498 584h1v9h-1zM509 584h1v9h-1zM520 584h1v9h-1zM532 584h1v9h-1zM543 584h1v9h-1zM554 584h1v9h-1zM565 584h1v9h-1zM577 584h1v9h-1zM588 584h1v9h-1zM599 584h1v9h-1zM622 584h1v9h-1zM633 584h1v9h-1zM644 584h1v9h-1zM487 211h169v1h-169zM465 220h213v1h-213zM442 230h259v1h-259zM431 240h281v1h-281zM408 249h327v1h-327zM386 268h371v1h-371zM375 287h393v1h-393zM363 297h417v1h-417zM363 307h417v1h-417zM352 316h439v1h-439zM341 335h461v1h-461zM341 354h461v1h-461zM330 364h483v1h-483zM330 373h483v1h-483zM330 383h483v1h-483zM330 393h483v1h-483zM330 402h483v1h-483zM330 421h483v1h-483zM341 440h461v1h-461zM341 450h461v1h-461zM341 459h461v1h-461zM352 469h439v1h-439zM363 488h417v1h-417zM375 507h393v1h-393zM386 517h371v1h-371zM386 526h371v1h-371zM397 536h349v1h-349zM408 546h327v1h-327zM431 555h281v1h-281zM465 574h213v1h-213z" fill="#ffffff" fill-opacity="0.26"/></svg>
<div style="position:absolute;left:329px;top:201px;width:485px;height:393px;border:1px solid #a8a8a8;box-sizing:border-box;"></div>
<svg style="position:absolute;left:0;top:0" width="954" height="666" font-family="Liberation Sans, sans-serif" font-size="9.7" fill="#1a1a1a" text-rendering="geometricPrecision"><text x="326.3" y="209.07" text-anchor="end">20</text><text x="326.3" y="218.60" text-anchor="end">19</text><text x="326.3" y="228.14" text-anchor="end">18</text><text x="326.3" y="237.68" text-anchor="end">17</text><text x="326.3" y="247.21" text-anchor="end">16</text><text x="326.3" y="256.75" text-anchor="end">15</text><text x="326.3" y="266.29" text-anchor="end">14</text><text x="326.3" y="275.82" text-anchor="end">13</text><text x="326.3" y="285.36" text-anchor="end">12</text><text x="326.3" y="294.90" text-anchor="end">11</text><text x="326.3" y="304.43" text-anchor="end">10</text><text x="326.3" y="313.97" text-anchor="end">9</text><text x="326.3" y="323.51" text-anchor="end">8</text><text x="326.3" y="333.04" text-anchor="end">7</text><text x="326.3" y="342.58" text-anchor="end">6</text><text x="326.3" y="352.12" text-anchor="end">5</text><text x="326.3" y="361.65" text-anchor="end">4</text><text x="326.3" y="371.19" text-anchor="end">3</text><text x="326.3" y="380.73" text-anchor="end">2</text><text x="326.3" y="390.26" text-anchor="end">1</text><text x="326.3" y="399.80" text-anchor="end">0</text><text x="326.3" y="409.34" text-anchor="end">-1</text><text x="326.3" y="418.87" text-anchor="end">-2</text><text x="326.3" y="428.41" text-anchor="end">-3</text><text x="326.3" y="437.95" text-anchor="end">-4</text><text x="326.3" y="447.48" text-anchor="end">-5</text><text x="326.3" y="457.02" text-anchor="end">-6</text><text x="326.3" y="466.56" text-anchor="end">-7</text><text x="326.3" y="476.09" text-anchor="end">-8</text><text x="326.3" y="485.63" text-anchor="end">-9</text><text x="326.3" y="495.17" text-anchor="end">-10</text><text x="326.3" y="504.70" text-anchor="end">-11</text><text x="326.3" y="514.24" text-anchor="end">-12</text><text x="326.3" y="523.78" text-anchor="end">-13</text><text x="326.3" y="533.31" text-anchor="end">-14</text><text x="326.3" y="542.85" text-anchor="end">-15</text><text x="326.3" y="552.39" text-anchor="end">-16</text><text x="326.3" y="561.92" text-anchor="end">-17</text><text x="326.3" y="571.46" text-anchor="end">-18</text><text x="326.3" y="581.00" text-anchor="end">-19</text><text x="326.3" y="590.53" text-anchor="end">-20</text><text transform="translate(339,595) rotate(-90)" text-anchor="end">-21</text><text transform="translate(350,595) rotate(-90)" text-anchor="end">-20</text><text transform="translate(362,595) rotate(-90)" text-anchor="end">-19</text><text transform="translate(373,595) rotate(-90)" text-anchor="end">-18</text><text transform="translate(384,595) rotate(-90)" text-anchor="end">-17</text><text transform="translate(395,595) rotate(-90)" text-anchor="end">-16</text><text transform="translate(407,595) rotate(-90)" text-anchor="end">-15</text><text transform="translate(418,595) rotate(-90)" text-anchor="end">-14</text><text transform="translate(429,595) rotate(-90)" text-anchor="end">-13</text><text transform="translate(440,595) rotate(-90)" text-anchor="end">-12</text><text transform="translate(451,595) rotate(-90)" text-anchor="end">-11</text><text transform="translate(463,595) rotate(-90)" text-anchor="end">-10</text><text transform="translate(474,595) rotate(-90)" text-anchor="end">-9</text><text transform="translate(485,595) rotate(-90)" text-anchor="end">-8</text><text transform="translate(496,595) rotate(-90)" text-anchor="end">-7</text><text transform="translate(508,595) rotate(-90)" text-anchor="end">-6</text><text transform="translate(519,595) rotate(-90)" text-anchor="end">-5</text><text transform="translate(530,595) rotate(-90)" text-anchor="end">-4</text><text transform="translate(541,595) rotate(-90)" text-anchor="end">-3</text><text transform="translate(553,595) rotate(-90)" text-anchor="end">-2</text><text transform="translate(564,595) rotate(-90)" text-anchor="end">-1</text><text transform="translate(575,595) rotate(-90)" text-anchor="end">0</text><text transform="translate(586,595) rotate(-90)" text-anchor="end">1</text><text transform="translate(597,595) rotate(-90)" text-anchor="end">2</text><text transform="translate(609,595) rotate(-90)" text-anchor="end">3</text><text transform="translate(620,595) rotate(-90)" text-anchor="end">4</text><text transform="translate(631,595) rotate(-90)" text-anchor="end">5</text><text transform="translate(642,595) rotate(-90)" text-anchor="end">6</text><text transform="translate(654,595) rotate(-90)" text-anchor="end">7</text><text transform="translate(665,595) rotate(-90)" text-anchor="end">8</text><text transform="translate(676,595) rotate(-90)" text-anchor="end">9</text><text transform="translate(687,595) rotate(-90)" text-anchor="end">10</text><text transform="translate(699,595) rotate(-90)" text-anchor="end">11</text><text transform="translate(710,595) rotate(-90)" text-anchor="end">12</text><text transform="translate(721,595) rotate(-90)" text-anchor="end">13</text><text transform="translate(732,595) rotate(-90)" text-anchor="end">14</text><text transform="translate(743,595) rotate(-90)" text-anchor="end">15</text><text transform="translate(755,595) rotate(-90)" text-anchor="end">16</text><text transform="translate(766,595) rotate(-90)" text-anchor="end">17</text><text transform="translate(777,595) rotate(-90)" text-anchor="end">18</text><text transform="translate(788,595) rotate(-90)" text-anchor="end">19</text><text transform="translate(800,595) rotate(-90)" text-anchor="end">20</text><text transform="translate(811,595) rotate(-90)" text-anchor="end">21</text><text transform="translate(304.2,397) rotate(-90)" text-anchor="middle" font-size="11.5">Y_Die</text><text x="570" y="620" text-anchor="middle" font-size="11.3">X_Die</text></svg>
<div style="position:absolute;left:854px;top:644px;width:1px;height:19px;background:#8a93b5;"></div>
<svg style="position:absolute;left:860px;top:647px" width="13" height="12" viewBox="0 0 13 12"><path d="M2.5 6 V11.5 H10.5 V6 L6.5 2.5Z" fill="#e2eef8"/><path d="M3 11.5H10" stroke="#8ec4ea" stroke-width="1"/><path d="M0.8 6.2 L6.5 1.2 L12.2 6.2" fill="none" stroke="#3a96d4" stroke-width="1.8" stroke-linejoin="round"/><rect x="5.3" y="6.5" width="2.4" height="5" fill="#9a6a10"/></svg>
<svg style="position:absolute;left:875px;top:647px" width="14" height="12" viewBox="0 0 14 12"><rect x="0.8" y="0.8" width="10.5" height="9.5" fill="#fff" stroke="#1f5ab0" stroke-width="1.4"/><path d="M1.5 3H11 M1.5 5.5H11 M1.5 8H11" stroke="#c8d8ee" stroke-width="0.8"/><path d="M1.5 2.8H6" stroke="#f06060" stroke-width="1"/><path d="M4 1.5V10 M7 1.5V10 M9.5 1.5V10" stroke="#e8a0a0" stroke-width="0.5"/><circle cx="7.5" cy="4.5" r="1" fill="#111"/><path d="M7.5 11.5L12.5 6.5 M9 8L12 10" stroke="#3a8ee0" stroke-width="1.4"/></svg>
<div style="position:absolute;left:900px;top:647px;width:14px;height:13px;background:#fff;border:1px solid #333;box-sizing:border-box;"></div>
<svg style="position:absolute;left:920px;top:649px" width="9" height="7" viewBox="0 0 9 7"><path d="M0 0 H9 L4.5 7 Z" fill="#000"/></svg>
<div style="position:absolute;left:948px;top:654px;width:1px;height:1px;background:#9aa0b8;"></div>
<div style="position:absolute;left:945px;top:657px;width:1px;height:1px;background:#9aa0b8;"></div>
<div style="position:absolute;left:948px;top:657px;width:1px;height:1px;background:#9aa0b8;"></div>
<div style="position:absolute;left:942px;top:660px;width:1px;height:1px;background:#9aa0b8;"></div>
<div style="position:absolute;left:945px;top:660px;width:1px;height:1px;background:#9aa0b8;"></div>
<div style="position:absolute;left:948px;top:660px;width:1px;height:1px;background:#9aa0b8;"></div>
</body></html>
